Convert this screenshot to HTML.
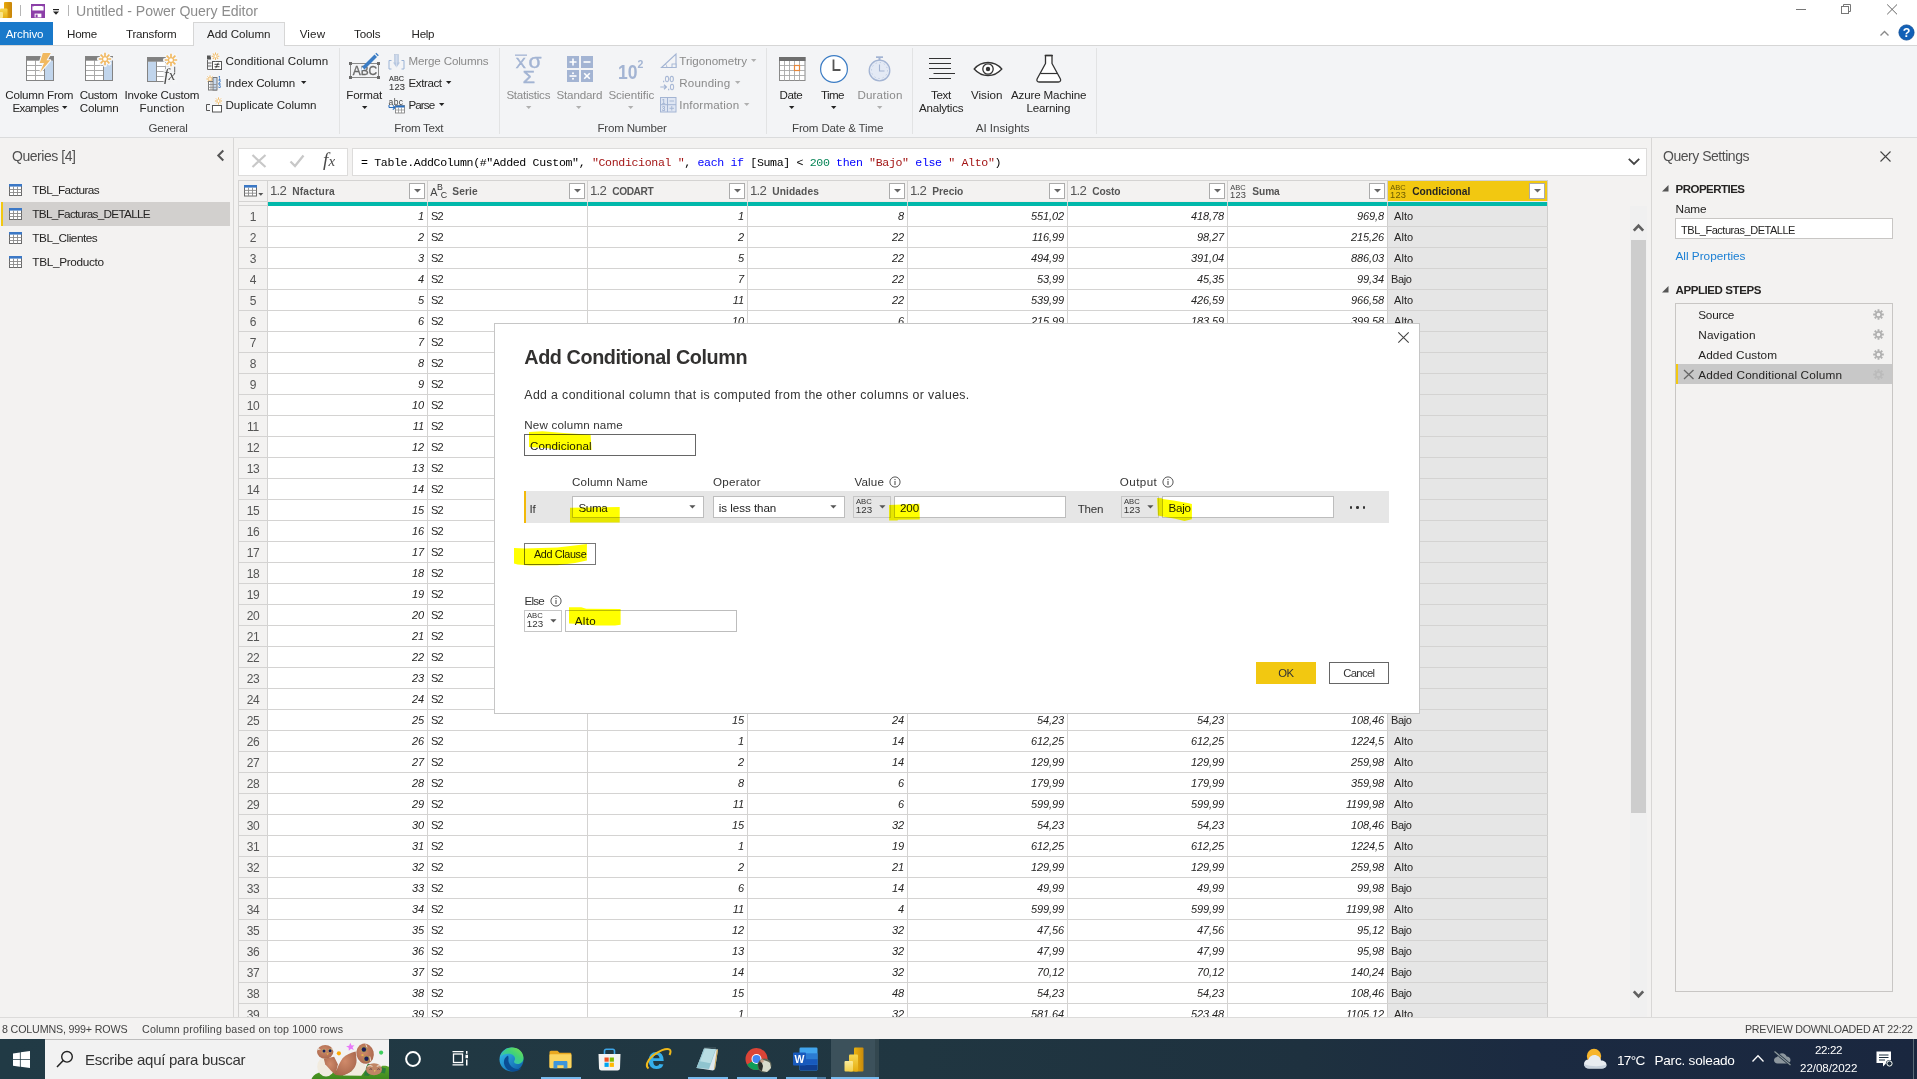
<!DOCTYPE html>
<html><head><meta charset="utf-8"><title>Untitled - Power Query Editor</title><style>html,body{margin:0;padding:0;}
body{width:1917px;height:1079px;overflow:hidden;position:relative;background:#f3f2f1;font-family:"Liberation Sans",sans-serif;color:#252423;}
.t{position:absolute;white-space:pre;line-height:1;display:block;}
.r{position:absolute;display:block;}
svg{overflow:visible;}</style></head><body>
<div class="r" style="left:0px;top:0px;width:1917px;height:46px;background:#ffffff;"></div>
<svg class="r" style="left:0px;top:0px;" width="14" height="22" viewBox="0 0 14 22">
      <defs><linearGradient id="pb1" x1="0" y1="0" x2="1" y2="0"><stop offset="0" stop-color="#e8a90a"/><stop offset="1" stop-color="#c8850a"/></linearGradient>
      <linearGradient id="pb2" x1="0" y1="0" x2="0" y2="1"><stop offset="0" stop-color="#f6d751"/><stop offset="1" stop-color="#e6ad10"/></linearGradient></defs>
      <rect x="4" y="2" width="8" height="16" rx="1" fill="url(#pb1)"/>
      <rect x="0" y="8.5" width="7.5" height="9.5" rx="1" fill="url(#pb2)"/>
      <rect x="-4" y="12" width="7" height="6" rx="1" fill="#f9e589"/></svg>
<div class="r" style="left:20px;top:5px;width:1px;height:11px;background:#b5b5b5;"></div>
<svg class="r" style="left:31px;top:4px;" width="14" height="14" viewBox="0 0 14 14"><path d="M0.7 0.7h12.6v12.6h-12.6z" fill="#fff" stroke="#8c3fa8" stroke-width="1.4"/>
      <rect x="0.7" y="0.7" width="12.6" height="1.6" fill="#8c3fa8"/>
      <rect x="3" y="2" width="8" height="4.2" fill="#fff" stroke="#8c3fa8" stroke-width="0"/>
      <path d="M0.7 6.5h12.6v6.8h-12.6z" fill="#8c3fa8"/>
      <rect x="3.6" y="9.6" width="6.8" height="3.8" fill="#fff"/><rect x="4.6" y="10.6" width="2" height="2.8" fill="#8c3fa8"/></svg>
<svg class="r" style="left:52px;top:8px;" width="8" height="8" viewBox="0 0 8 8"><rect x="1" y="1" width="6" height="1.2" fill="#222"/><path d="M1 3.6h6l-3 3.2z" fill="#222"/></svg>
<div class="r" style="left:68px;top:5px;width:1px;height:11px;background:#b5b5b5;"></div>
<span class="t" style="top:4.00px;font-size:14.1px;left:76.00px;letter-spacing:-0.047px;color:#8c8c8c;">Untitled - Power Query Editor</span>
<div class="r" style="left:1796px;top:9px;width:10px;height:1px;background:#777;"></div>
<svg class="r" style="left:1840px;top:3px;" width="12" height="12" viewBox="0 0 12 12"><path d="M3.5 3.5v-2h7v7h-2" fill="none" stroke="#777" stroke-width="1"/><rect x="1.5" y="3.5" width="7" height="7" fill="none" stroke="#777" stroke-width="1"/></svg>
<svg class="r" style="left:1885px;top:2.5px;" width="13" height="13" viewBox="0 0 13 13"><path d="M2.2 1.5l9.8 9.8M12 1.5l-9.8 9.8" stroke="#666" stroke-width="1" fill="none"/></svg>
<svg class="r" style="left:1879px;top:28px;" width="12" height="10" viewBox="0 0 12 10"><path d="M1.5 7.5l4-4 4 4" stroke="#8a8a8a" stroke-width="1.4" fill="none"/></svg>
<svg class="r" style="left:1897.5px;top:24.4px;" width="17" height="17" viewBox="0 0 17 17"><circle cx="8.5" cy="8.5" r="7.6" fill="#1160b7" stroke="#0a4a94" stroke-width="0.8"/><text x="8.5" y="13" text-anchor="middle" font-family="Liberation Sans" font-weight="bold" font-size="12.5" fill="#fff">?</text></svg>
<div class="r" style="left:0px;top:45px;width:1917px;height:1px;background:#d6d6d6;"></div>
<div class="r" style="left:0px;top:22px;width:53px;height:23px;background:#1979ca;"></div>
<span class="t" style="top:28.00px;font-size:11.6px;left:5.70px;letter-spacing:-0.140px;color:#ffffff;">Archivo</span>
<span class="t" style="top:28.00px;font-size:11.6px;left:67.00px;letter-spacing:-0.236px;">Home</span>
<span class="t" style="top:28.00px;font-size:11.6px;left:126.00px;letter-spacing:-0.202px;">Transform</span>
<div class="r" style="left:193px;top:22px;width:90px;height:24px;background:#f3f4f6;border:1px solid #d6d6d6;border-bottom:none;"></div>
<span class="t" style="top:28.00px;font-size:11.6px;left:207.00px;letter-spacing:-0.033px;">Add Column</span>
<span class="t" style="top:28.00px;font-size:11.6px;left:299.70px;letter-spacing:0.142px;">View</span>
<span class="t" style="top:28.00px;font-size:11.6px;left:354.00px;letter-spacing:-0.156px;">Tools</span>
<span class="t" style="top:28.00px;font-size:11.6px;left:411.60px;letter-spacing:-0.289px;">Help</span>
<div class="r" style="left:0px;top:46px;width:1917px;height:91px;background:#f3f4f6;"></div>
<div class="r" style="left:0px;top:137px;width:1917px;height:1px;background:#dadbdc;"></div>
<div class="r" style="left:193.5px;top:45px;width:90px;height:2px;background:#f3f4f6;"></div>
<div class="r" style="left:339px;top:48px;width:1px;height:86px;background:#e2e3e4;"></div>
<div class="r" style="left:499px;top:48px;width:1px;height:86px;background:#e2e3e4;"></div>
<div class="r" style="left:766px;top:48px;width:1px;height:86px;background:#e2e3e4;"></div>
<div class="r" style="left:912px;top:48px;width:1px;height:86px;background:#e2e3e4;"></div>
<div class="r" style="left:1096px;top:48px;width:1px;height:86px;background:#e2e3e4;"></div>
<svg class="r" style="left:26px;top:52px;" width="30" height="30" viewBox="0 0 30 30"><g transform="translate(0,4)"><rect x="0.5" y="0.5" width="27" height="24" fill="#fff" stroke="#838383"/>
      <path d="M1 9.5h26M1 14.5h26M1 19.5h26M9.5 4.5v20M18.5 4.5v20" stroke="#a9a9a9" stroke-width="1" fill="none"/>
      <rect x="18.5" y="4.5" width="9.0" height="20" fill="#c1d5ec"/>
      <path d="M18.5 4.5v20" stroke="#8a8a8a" stroke-width="1"/>
      <rect x="0" y="0" width="28" height="4.7" fill="#808080"/>
      <rect x="0.5" y="0.5" width="27" height="24" fill="none" stroke="#838383"/></g>
      <path d="M16.85 1L24.8 1L20.5 8.3L24.2 8.3L14.1 20.2L18 11.1L13.7 11.1z" fill="#f6f7f9" stroke="#f6f7f9" stroke-width="2.2" stroke-linejoin="round"/>
      <path d="M16.85 1L24.8 1L20.5 8.3L24.2 8.3L14.1 20.2L18 11.1L13.7 11.1z" fill="#f1b961"/></svg>
<span class="t" style="top:89.00px;font-size:11.6px;left:5.30px;letter-spacing:-0.205px;">Column From</span>
<span class="t" style="top:102.00px;font-size:11.6px;left:12.40px;letter-spacing:-0.604px;">Examples</span>
<svg class="r" style="left:61.7px;top:106.2px;" width="7" height="5" viewBox="0 0 7 5"><path d="M0 0h5.400l-2.700 3z" fill="#222"/></svg>
<svg class="r" style="left:85px;top:50px;" width="32" height="32" viewBox="0 0 32 32"><g transform="translate(0,6)"><rect x="0.5" y="0.5" width="27" height="24" fill="#fff" stroke="#838383"/>
      <path d="M1 9.5h26M1 14.5h26M1 19.5h26M9.5 4.5v20M18.5 4.5v20" stroke="#a9a9a9" stroke-width="1" fill="none"/>
      <rect x="18.5" y="4.5" width="9.0" height="20" fill="#c1d5ec"/>
      <path d="M18.5 4.5v20" stroke="#8a8a8a" stroke-width="1"/>
      <rect x="0" y="0" width="28" height="4.7" fill="#808080"/>
      <rect x="0.5" y="0.5" width="27" height="24" fill="none" stroke="#838383"/></g><path d="M23.10 9.00L26.20 9.00M22.19 11.19L24.38 13.38M20.00 12.10L20.00 15.20M17.81 11.19L15.62 13.38M16.90 9.00L13.80 9.00M17.81 6.81L15.62 4.62M20.00 5.90L20.00 2.80M22.19 6.81L24.38 4.62" stroke="#f6f7f9" stroke-width="3.84" stroke-linecap="round" fill="none"/><circle cx="20" cy="9" r="3.84" fill="#f6f7f9"/><path d="M23.10 9.00L26.20 9.00M22.19 11.19L24.38 13.38M20.00 12.10L20.00 15.20M17.81 11.19L15.62 13.38M16.90 9.00L13.80 9.00M17.81 6.81L15.62 4.62M20.00 5.90L20.00 2.80M22.19 6.81L24.38 4.62" stroke="#f1b961" stroke-width="1.67" fill="none"/><circle cx="20" cy="9" r="2.48" fill="#fff" stroke="#f1b961" stroke-width="1.24"/></svg>
<span class="t" style="top:89.00px;font-size:11.6px;left:79.80px;letter-spacing:-0.394px;">Custom</span>
<span class="t" style="top:102.00px;font-size:11.6px;left:79.80px;letter-spacing:-0.212px;">Column</span>
<svg class="r" style="left:147px;top:50px;" width="34" height="36" viewBox="0 0 34 36"><g transform="translate(0,7)"><rect x="0.5" y="0.5" width="26" height="24" fill="#fff" stroke="#838383"/>
      <path d="M1 9.5h25M1 14.5h25M1 19.5h25M9.5 4.5v20M18.5 4.5v20" stroke="#a9a9a9" stroke-width="1" fill="none"/>
      <rect x="0.5" y="4.5" width="9.5" height="20" fill="#c1d5ec"/>
      <path d="M9.5 4.5v20" stroke="#8a8a8a" stroke-width="1"/>
      <rect x="0" y="0" width="27" height="4.7" fill="#808080"/>
      <rect x="0.5" y="0.5" width="26" height="24" fill="none" stroke="#838383"/></g>
      <rect x="19" y="12" width="10" height="22" fill="#f3f4f6" opacity="0.75"/><rect x="24" y="7" width="6" height="26" fill="#f3f4f6"/><rect x="16.500" y="19" width="14" height="15" fill="#f3f4f6" opacity="0.85"/>
      <path d="M27.10 10.00L30.20 10.00M26.19 12.19L28.38 14.38M24.00 13.10L24.00 16.20M21.81 12.19L19.62 14.38M20.90 10.00L17.80 10.00M21.81 7.81L19.62 5.62M24.00 6.90L24.00 3.80M26.19 7.81L28.38 5.62" stroke="#f6f7f9" stroke-width="3.84" stroke-linecap="round" fill="none"/><circle cx="24" cy="10" r="3.84" fill="#f6f7f9"/><path d="M27.10 10.00L30.20 10.00M26.19 12.19L28.38 14.38M24.00 13.10L24.00 16.20M21.81 12.19L19.62 14.38M20.90 10.00L17.80 10.00M21.81 7.81L19.62 5.62M24.00 6.90L24.00 3.80M26.19 7.81L28.38 5.62" stroke="#f1b961" stroke-width="1.67" fill="none"/><circle cx="24" cy="10" r="2.48" fill="#fff" stroke="#f1b961" stroke-width="1.24"/>
      <text x="17" y="30" font-family="Liberation Serif" font-style="italic" font-size="16.500" fill="#4a4a4a">f</text><text x="21.500" y="30.300" font-family="Liberation Serif" font-style="italic" font-size="15.500" fill="#4a4a4a">x</text><rect x="27.200" y="16.700" width="1" height="6" fill="#666"/></svg>
<span class="t" style="top:89.00px;font-size:11.6px;left:124.60px;letter-spacing:-0.205px;">Invoke Custom</span>
<span class="t" style="top:102.00px;font-size:11.6px;left:139.50px;letter-spacing:0.051px;">Function</span>
<svg class="r" style="left:206px;top:52px;" width="17" height="18" viewBox="0 0 17 18"><rect x="1" y="3.5" width="4" height="4" fill="#555"/><path d="M1.5 8v9.5h5M1.5 11h4M1.5 14h4" stroke="#666" fill="none"/>
      <rect x="6.5" y="9.5" width="9" height="8" fill="#fff" stroke="#555"/><path d="M8.5 12.3h5M8.5 14.7h5M12.3 10.8l-2.6 5.4" stroke="#333" stroke-width="0.9"/><path d="M11.40 4.20L13.30 4.20M10.84 5.54L12.19 6.89M9.50 6.10L9.50 8.00M8.16 5.54L6.81 6.89M7.60 4.20L5.70 4.20M8.16 2.86L6.81 1.51M9.50 2.30L9.50 0.40M10.84 2.86L12.19 1.51" stroke="#f6f7f9" stroke-width="2.36" stroke-linecap="round" fill="none"/><circle cx="9.5" cy="4.2" r="2.36" fill="#f6f7f9"/><path d="M11.40 4.20L13.30 4.20M10.84 5.54L12.19 6.89M9.50 6.10L9.50 8.00M8.16 5.54L6.81 6.89M7.60 4.20L5.70 4.20M8.16 2.86L6.81 1.51M9.50 2.30L9.50 0.40M10.84 2.86L12.19 1.51" stroke="#f1b961" stroke-width="1.03" fill="none"/><circle cx="9.5" cy="4.2" r="1.52" fill="#fff" stroke="#f1b961" stroke-width="0.76"/></svg>
<span class="t" style="top:55.00px;font-size:11.6px;left:225.50px;letter-spacing:0.093px;">Conditional Column</span>
<svg class="r" style="left:206px;top:75px;" width="17" height="16" viewBox="0 0 17 16"><path d="M5.80 4.00L7.60 4.00M5.27 5.27L6.55 6.55M4.00 5.80L4.00 7.60M2.73 5.27L1.45 6.55M2.20 4.00L0.40 4.00M2.73 2.73L1.45 1.45M4.00 2.20L4.00 0.40M5.27 2.73L6.55 1.45" stroke="#f6f7f9" stroke-width="2.23" stroke-linecap="round" fill="none"/><circle cx="4" cy="4" r="2.23" fill="#f6f7f9"/><path d="M5.80 4.00L7.60 4.00M5.27 5.27L6.55 6.55M4.00 5.80L4.00 7.60M2.73 5.27L1.45 6.55M2.20 4.00L0.40 4.00M2.73 2.73L1.45 1.45M4.00 2.20L4.00 0.40M5.27 2.73L6.55 1.45" stroke="#f1b961" stroke-width="0.97" fill="none"/><circle cx="4" cy="4" r="1.44" fill="#fff" stroke="#f1b961" stroke-width="0.72"/><rect x="2.5" y="6.5" width="8" height="8.5" fill="#fff" stroke="#777"/><rect x="7" y="2.5" width="4" height="12.5" fill="#c8daf0" stroke="#777"/>
      <path d="M2.5 9.5h8M2.5 12.3h8M5 6.5v8.5" stroke="#888" stroke-width="0.8"/>
      <text x="12.2" y="4.6" font-family="Liberation Sans" font-size="4.6" font-weight="bold" fill="#2a6fc0">1</text><text x="12.2" y="9" font-family="Liberation Sans" font-size="4.6" font-weight="bold" fill="#2a6fc0">2</text><text x="12.2" y="13.4" font-family="Liberation Sans" font-size="4.6" font-weight="bold" fill="#2a6fc0">3</text></svg>
<span class="t" style="top:77.00px;font-size:11.6px;left:225.50px;letter-spacing:-0.156px;">Index Column</span>
<svg class="r" style="left:300.8px;top:81px;" width="7" height="5" viewBox="0 0 7 5"><path d="M0 0h5.400l-2.700 3z" fill="#222"/></svg>
<svg class="r" style="left:206px;top:97px;" width="17" height="16" viewBox="0 0 17 16"><path d="M14.30 4.00L16.10 4.00M13.77 5.27L15.05 6.55M12.50 5.80L12.50 7.60M11.23 5.27L9.95 6.55M10.70 4.00L8.90 4.00M11.23 2.73L9.95 1.45M12.50 2.20L12.50 0.40M13.77 2.73L15.05 1.45" stroke="#f6f7f9" stroke-width="2.23" stroke-linecap="round" fill="none"/><circle cx="12.5" cy="4" r="2.23" fill="#f6f7f9"/><path d="M14.30 4.00L16.10 4.00M13.77 5.27L15.05 6.55M12.50 5.80L12.50 7.60M11.23 5.27L9.95 6.55M10.70 4.00L8.90 4.00M11.23 2.73L9.95 1.45M12.50 2.20L12.50 0.40M13.77 2.73L15.05 1.45" stroke="#f1b961" stroke-width="0.97" fill="none"/><circle cx="12.5" cy="4" r="1.44" fill="#fff" stroke="#f1b961" stroke-width="0.72"/><path d="M4 7.5h-3.5v6h3.5" fill="none" stroke="#555"/><rect x="6.5" y="8.5" width="9" height="6.5" fill="#fff" stroke="#555"/></svg>
<span class="t" style="top:99.00px;font-size:11.6px;left:225.50px;letter-spacing:-0.035px;">Duplicate Column</span>
<span class="t" style="top:122.00px;font-size:11.6px;left:148.60px;letter-spacing:-0.353px;color:#444;">General</span>
<svg class="r" style="left:348px;top:51px;" width="34" height="29" viewBox="0 0 34 29"><text x="4.700" y="24.400" font-family="Liberation Sans" font-size="12.2" fill="#6a6a6a" stroke="#6a6a6a" stroke-width="0.350" textLength="24.500" lengthAdjust="spacingAndGlyphs">ABC</text>
      <rect x="2.500" y="12.500" width="28" height="14" fill="none" stroke="#8a8a8a"/>
      <g fill="#6a6a6a"><rect x="1" y="11" width="3" height="3"/><rect x="29" y="11" width="3" height="3"/><rect x="1" y="25" width="3" height="3"/><rect x="29" y="25" width="3" height="3"/></g>
      <path d="M13 19.5l1-3.5 12.5-12.5 2.5 2.5-12.5 12.5z" fill="#3b7cc4"/><path d="M27.3 2.7l1-1 2.5 2.5-1 1z" fill="#3b7cc4"/><path d="M13 19.5l1-3.5 2.5 2.5z" fill="#fff"/></svg>
<span class="t" style="top:89.00px;font-size:11.6px;left:346.30px;letter-spacing:-0.173px;">Format</span>
<svg class="r" style="left:362px;top:106.2px;" width="7" height="5" viewBox="0 0 7 5"><path d="M0 0h5.400l-2.700 3z" fill="#222"/></svg>
<svg class="r" style="left:388px;top:54px;" width="18" height="16" viewBox="0 0 18 16"><path d="M3.5 6.5h-2.5v8.5h2.5M13.500 6.500h2.500v8.500h-2.500" fill="none" stroke="#9ab3d6"/>
      <rect x="6.5" y="0.5" width="4" height="9" fill="#c5d3e8" stroke="#b5c3d8" stroke-width="0.6"/><path d="M5 8.5h7l-3.500 5z" fill="#b7c7e0"/><path d="M8.5 1v12" stroke="#d8e0ee" stroke-width="0.8"/></svg>
<span class="t" style="top:55.00px;font-size:11.6px;left:408.50px;letter-spacing:-0.152px;color:#8a8a8a;">Merge Columns</span>
<svg class="r" style="left:388px;top:74px;" width="18" height="17" viewBox="0 0 18 17"><text x="1" y="6.500" font-family="Liberation Sans" font-size="7.200" fill="#3a3a3a" stroke="#3a3a3a" stroke-width="0.150" textLength="15">ABC</text><text x="1" y="15.900" font-family="Liberation Sans" font-size="9.300" fill="#3a3a3a" stroke="#3a3a3a" stroke-width="0.100" textLength="16">123</text></svg>
<span class="t" style="top:77.00px;font-size:11.6px;left:408.50px;letter-spacing:-0.414px;">Extract</span>
<svg class="r" style="left:446px;top:81px;" width="7" height="5" viewBox="0 0 7 5"><path d="M0 0h5.400l-2.700 3z" fill="#222"/></svg>
<svg class="r" style="left:388px;top:97px;" width="18" height="17" viewBox="0 0 18 17"><text x="0.500" y="7.500" font-family="Liberation Sans" font-size="8.500" fill="#444" textLength="14.500">abc</text>
      <path d="M1 10.5h6M4.800 8.300l2.500 2.200-2.500 2.200" fill="none" stroke="#2a6fc0" stroke-width="1.100"/><path d="M1 8v2.500" stroke="#2a6fc0" stroke-width="1.100"/>
      <rect x="7.500" y="8.500" width="9" height="7.500" fill="#fff" stroke="#777" stroke-width="0.800"/><rect x="7.500" y="8.500" width="9" height="2" fill="#2a6fc0"/><path d="M7.500 13h9M10.500 10.500v5.500M13.500 10.500v5.500" stroke="#888" stroke-width="0.700"/></svg>
<span class="t" style="top:99.00px;font-size:11.6px;left:408.50px;letter-spacing:-0.921px;">Parse</span>
<svg class="r" style="left:438.6px;top:103.1px;" width="7" height="5" viewBox="0 0 7 5"><path d="M0 0h5.400l-2.700 3z" fill="#222"/></svg>
<span class="t" style="top:122.00px;font-size:11.6px;left:394.30px;letter-spacing:-0.261px;color:#444;">From Text</span>
<svg class="r" style="left:514px;top:53px;" width="30" height="32" viewBox="0 0 30 32"><text x="1.800" y="15.200" font-family="Liberation Sans" font-size="15" fill="#a3b4d3" stroke="#a3b4d3" stroke-width="0.500">X</text><rect x="1" y="1.500" width="12" height="1.300" fill="#a3b4d3"/>
      <text x="14.500" y="15.200" font-family="Liberation Sans" font-size="20.500" fill="#a3b4d3" stroke="#a3b4d3" stroke-width="0.400" textLength="13" lengthAdjust="spacingAndGlyphs">σ</text>
      <text x="8.800" y="29.700" font-family="Liberation Sans" font-size="16.500" fill="#a3b4d3" stroke="#a3b4d3" stroke-width="0.500" textLength="12.200" lengthAdjust="spacingAndGlyphs">Σ</text></svg>
<span class="t" style="top:89.00px;font-size:11.6px;left:506.40px;letter-spacing:-0.261px;color:#8a8a8a;">Statistics</span>
<svg class="r" style="left:525.8px;top:106.2px;" width="7" height="5" viewBox="0 0 7 5"><path d="M0 0h5.400l-2.700 3z" fill="#b0b0b0"/></svg>
<svg class="r" style="left:567px;top:56px;" width="27" height="27" viewBox="0 0 27 27"><g fill="#a3b4d3"><rect x="0" y="0" width="12" height="12"/><rect x="14" y="0" width="12" height="12"/><rect x="0" y="14" width="12" height="12"/><rect x="14" y="14" width="12" height="12"/></g>
      <g stroke="#fff" stroke-width="1.6" fill="none"><path d="M2.5 6h7M6 2.500v7"/><path d="M16.500 6h7"/><path d="M2.500 20h7"/><path d="M17.200 17.200l5.600 5.600M22.800 17.200l-5.600 5.600"/></g>
      <g fill="#fff"><circle cx="6" cy="17.200" r="1"/><circle cx="6" cy="22.800" r="1"/></g></svg>
<span class="t" style="top:89.00px;font-size:11.6px;left:556.40px;letter-spacing:-0.135px;color:#8a8a8a;">Standard</span>
<svg class="r" style="left:576.4px;top:106.2px;" width="7" height="5" viewBox="0 0 7 5"><path d="M0 0h5.400l-2.700 3z" fill="#b0b0b0"/></svg>
<svg class="r" style="left:617px;top:55px;" width="30" height="26" viewBox="0 0 30 26"><text x="1" y="23.500" font-family="Liberation Sans" font-weight="bold" font-size="20.500" fill="#a3b4d3" textLength="19.500" lengthAdjust="spacingAndGlyphs">10</text>
      <text x="20.500" y="12.500" font-family="Liberation Sans" font-weight="bold" font-size="10.500" fill="#a3b4d3">2</text></svg>
<span class="t" style="top:89.00px;font-size:11.6px;left:608.40px;letter-spacing:-0.052px;color:#8a8a8a;">Scientific</span>
<svg class="r" style="left:627.8px;top:106.2px;" width="7" height="5" viewBox="0 0 7 5"><path d="M0 0h5.400l-2.700 3z" fill="#b0b0b0"/></svg>
<svg class="r" style="left:660px;top:52px;" width="17" height="17" viewBox="0 0 17 17"><path d="M1.5 15.500h14.500v-13.500z" fill="none" stroke="#a3b4d3" stroke-width="1.100"/><rect x="12" y="12" width="4" height="3.500" fill="#f3f4f6" stroke="#a3b4d3" stroke-width="0.900"/><path d="M7 15.500a6 6 0 0 0-1.500-3.500" fill="none" stroke="#a3b4d3" stroke-width="0.900"/></svg>
<span class="t" style="top:55.00px;font-size:11.6px;left:679.30px;letter-spacing:-0.017px;color:#8a8a8a;">Trigonometry</span>
<svg class="r" style="left:751px;top:59px;" width="7" height="5" viewBox="0 0 7 5"><path d="M0 0h5.400l-2.700 3z" fill="#b0b0b0"/></svg>
<svg class="r" style="left:660px;top:75px;" width="17" height="16" viewBox="0 0 17 16"><text x="2.500" y="7" font-family="Liberation Sans" font-size="8.200" fill="#a3b4d3" stroke="#a3b4d3" stroke-width="0.300" textLength="11.500">.00</text><text x="7.500" y="15.300" font-family="Liberation Sans" font-size="8.200" fill="#a3b4d3" stroke="#a3b4d3" stroke-width="0.300">.0</text>
      <path d="M0.300 12h6M4 9.700l2.400 2.300-2.400 2.300" fill="none" stroke="#a3b4d3" stroke-width="1.200"/></svg>
<span class="t" style="top:77.00px;font-size:11.6px;left:679.30px;letter-spacing:0.180px;color:#8a8a8a;">Rounding</span>
<svg class="r" style="left:735px;top:81px;" width="7" height="5" viewBox="0 0 7 5"><path d="M0 0h5.400l-2.700 3z" fill="#b0b0b0"/></svg>
<svg class="r" style="left:660px;top:97px;" width="17" height="16" viewBox="0 0 17 16"><rect x="0.500" y="0.500" width="15.500" height="14.500" fill="#dfe6f3" stroke="#a3b4d3"/><path d="M0.500 7.700h15.500M7.500 0.500v14.500" stroke="#a3b4d3"/>
      <text x="1.800" y="6.500" font-family="Liberation Sans" font-size="6.500" fill="#a3b4d3" font-weight="bold">1</text><text x="1.800" y="14" font-family="Liberation Sans" font-size="6.500" fill="#a3b4d3" font-weight="bold">3</text>
      <path d="M9.500 4h4.500M9.500 11.300h4.500M11.750 9v4.600" stroke="#a3b4d3" stroke-width="0.900"/></svg>
<span class="t" style="top:99.00px;font-size:11.6px;left:679.30px;letter-spacing:0.179px;color:#8a8a8a;">Information</span>
<svg class="r" style="left:744px;top:103.1px;" width="7" height="5" viewBox="0 0 7 5"><path d="M0 0h5.400l-2.700 3z" fill="#b0b0b0"/></svg>
<span class="t" style="top:122.00px;font-size:11.6px;left:597.40px;letter-spacing:-0.204px;color:#444;">From Number</span>
<svg class="r" style="left:779px;top:57px;" width="27" height="24" viewBox="0 0 27 24"><rect x="0.500" y="0.500" width="25.500" height="23" fill="#fff" stroke="#8a8a8a"/><rect x="0" y="0" width="26.500" height="4" fill="#6e6e6e"/>
      <path d="M1 8.500h25M1 13.500h25M1 18.500h25M5.500 4v19.500M10.500 4v19.500M15.500 4v19.500M20.500 4v19.500" stroke="#a8a8a8" stroke-width="0.900" fill="none"/>
      <rect x="15.500" y="8.500" width="5" height="5" fill="#fff" stroke="#e8873a" stroke-width="1.200"/></svg>
<span class="t" style="top:89.00px;font-size:11.6px;left:779.50px;letter-spacing:-0.426px;">Date</span>
<svg class="r" style="left:788.5px;top:106.2px;" width="7" height="5" viewBox="0 0 7 5"><path d="M0 0h5.400l-2.700 3z" fill="#222"/></svg>
<svg class="r" style="left:819px;top:54px;" width="30" height="30" viewBox="0 0 30 30"><circle cx="15" cy="15" r="13.400" fill="#fff" stroke="#3b7cc4" stroke-width="1.200"/><path d="M14.500 5.500v10.500h7" fill="none" stroke="#555" stroke-width="1.800"/></svg>
<span class="t" style="top:89.00px;font-size:11.6px;left:821.00px;letter-spacing:-0.587px;">Time</span>
<svg class="r" style="left:830.5px;top:106.2px;" width="7" height="5" viewBox="0 0 7 5"><path d="M0 0h5.400l-2.700 3z" fill="#222"/></svg>
<svg class="r" style="left:867px;top:54px;" width="26" height="29" viewBox="0 0 26 29"><circle cx="12.500" cy="16.500" r="10.300" fill="#e4eaf5" stroke="#a3b4d3" stroke-width="1.300"/><rect x="9" y="2.300" width="7" height="1.700" fill="#a3b4d3"/><rect x="11.500" y="3" width="2" height="3.500" fill="#a3b4d3"/>
      <path d="M12.500 10.500v6.500h5" fill="none" stroke="#a3b4d3" stroke-width="1.100"/><circle cx="12.500" cy="16.500" r="8" fill="none" stroke="#a3b4d3" stroke-width="0.900" stroke-dasharray="0.800 3.400"/></svg>
<span class="t" style="top:89.00px;font-size:11.6px;left:857.40px;letter-spacing:0.169px;color:#8a8a8a;">Duration</span>
<svg class="r" style="left:876.6px;top:106.2px;" width="7" height="5" viewBox="0 0 7 5"><path d="M0 0h5.400l-2.700 3z" fill="#b0b0b0"/></svg>
<span class="t" style="top:122.00px;font-size:11.6px;left:792.00px;letter-spacing:-0.176px;color:#444;">From Date &amp; Time</span>
<svg class="r" style="left:928px;top:56px;" width="28" height="24" viewBox="0 0 28 24"><path d="M1 2.500h22M1 7.500h22M1 12.500h22M5.500 17.500h21.500M1 22.500h22" stroke="#333" stroke-width="1" fill="none"/></svg>
<span class="t" style="top:89.00px;font-size:11.6px;left:931.00px;letter-spacing:-0.369px;">Text</span>
<span class="t" style="top:102.00px;font-size:11.6px;left:919.00px;letter-spacing:-0.235px;">Analytics</span>
<svg class="r" style="left:973px;top:60px;" width="30" height="18" viewBox="0 0 30 18"><path d="M1.200 9c4-4.600 8.500-6.500 13.800-6.500s9.800 1.900 13.800 6.500c-4 4.600-8.500 6.500-13.800 6.500s-9.800-1.900-13.800-6.500z" fill="#fff" stroke="#333" stroke-width="1.300"/>
      <circle cx="15" cy="9" r="5.200" fill="#fff" stroke="#333" stroke-width="1.300"/><circle cx="15" cy="9" r="2.200" fill="#333"/></svg>
<span class="t" style="top:89.00px;font-size:11.6px;left:971.00px;letter-spacing:0.003px;">Vision</span>
<svg class="r" style="left:1035px;top:53px;" width="28" height="31" viewBox="0 0 28 31"><path d="M10.500 2.500h6.500v8l8.300 15.300c0.900 1.700 0 3.200-1.900 3.200h-19.300c-1.900 0-2.800-1.500-1.900-3.200l8.300-15.300z" fill="#fff" stroke="#333" stroke-width="1.300" stroke-linejoin="round"/>
      <path d="M5.300 20.500h17" stroke="#333" stroke-width="1.200"/><path d="M9.700 2.500h8.100" stroke="#333" stroke-width="1.300"/></svg>
<span class="t" style="top:89.00px;font-size:11.6px;left:1011.00px;letter-spacing:-0.152px;">Azure Machine</span>
<span class="t" style="top:102.00px;font-size:11.6px;left:1026.40px;letter-spacing:-0.169px;">Learning</span>
<span class="t" style="top:122.00px;font-size:11.6px;left:975.80px;letter-spacing:-0.042px;color:#444;">AI Insights</span>
<div class="r" style="left:0px;top:138px;width:1917px;height:880px;background:#f3f2f1;"></div>
<div class="r" style="left:233px;top:138px;width:1px;height:880px;background:#d8d7d6;"></div>
<span class="t" style="top:149.00px;font-size:14px;left:12.00px;letter-spacing:-0.452px;color:#505050;">Queries [4]</span>
<svg class="r" style="left:215px;top:149px;" width="10" height="13" viewBox="0 0 10 13"><path d="M8.300 1.500l-5 5 5 5" fill="none" stroke="#555" stroke-width="2"/></svg>
<svg class="r" style="left:9px;top:184px;" width="13" height="12" viewBox="0 0 13 12"><rect x="0.5" y="0.5" width="12" height="11" fill="#fff" stroke="#6a6a6a"/><rect x="0" y="0" width="13" height="2.6" fill="#3b78c6"/>
      <path d="M0.5 5.5h12M0.5 8.5h12M4.5 2.6v9M8.5 2.6v9" stroke="#8a8a8a" stroke-width="0.9" fill="none"/></svg>
<span class="t" style="top:185.00px;font-size:11.8px;left:32.30px;letter-spacing:-0.617px;">TBL_Facturas</span>
<div class="r" style="left:1px;top:202px;width:228.5px;height:23.7px;background:#d2d0ce;"></div>
<div class="r" style="left:1px;top:202px;width:2.2px;height:23.7px;background:#f2c811;"></div>
<svg class="r" style="left:9px;top:208px;" width="13" height="12" viewBox="0 0 13 12"><rect x="0.5" y="0.5" width="12" height="11" fill="#fff" stroke="#6a6a6a"/><rect x="0" y="0" width="13" height="2.6" fill="#3b78c6"/>
      <path d="M0.5 5.5h12M0.5 8.5h12M4.5 2.6v9M8.5 2.6v9" stroke="#8a8a8a" stroke-width="0.9" fill="none"/></svg>
<span class="t" style="top:209.00px;font-size:11.8px;left:32.30px;letter-spacing:-0.728px;">TBL_Facturas_DETALLE</span>
<svg class="r" style="left:9px;top:232px;" width="13" height="12" viewBox="0 0 13 12"><rect x="0.5" y="0.5" width="12" height="11" fill="#fff" stroke="#6a6a6a"/><rect x="0" y="0" width="13" height="2.6" fill="#3b78c6"/>
      <path d="M0.5 5.5h12M0.5 8.5h12M4.5 2.6v9M8.5 2.6v9" stroke="#8a8a8a" stroke-width="0.9" fill="none"/></svg>
<span class="t" style="top:233.00px;font-size:11.8px;left:32.30px;letter-spacing:-0.486px;">TBL_Clientes</span>
<svg class="r" style="left:9px;top:256px;" width="13" height="12" viewBox="0 0 13 12"><rect x="0.5" y="0.5" width="12" height="11" fill="#fff" stroke="#6a6a6a"/><rect x="0" y="0" width="13" height="2.6" fill="#3b78c6"/>
      <path d="M0.5 5.5h12M0.5 8.5h12M4.5 2.6v9M8.5 2.6v9" stroke="#8a8a8a" stroke-width="0.9" fill="none"/></svg>
<span class="t" style="top:257.00px;font-size:11.8px;left:32.30px;letter-spacing:-0.328px;">TBL_Producto</span>
<div class="r" style="left:238px;top:148px;width:110px;height:28px;background:#fff;border:1px solid #dddcdb;box-sizing:border-box;"></div>
<div class="r" style="left:352px;top:148px;width:1295px;height:28px;background:#fff;border:1px solid #dddcdb;box-sizing:border-box;"></div>
<svg class="r" style="left:250px;top:153px;" width="18" height="16" viewBox="0 0 18 16"><path d="M2.500 2l13 12M15.500 2l-13 12" stroke="#c8c8c8" stroke-width="2.200" fill="none"/></svg>
<svg class="r" style="left:288px;top:153px;" width="18" height="16" viewBox="0 0 18 16"><path d="M2.500 8.500l4.500 4.500 8.500-10.500" stroke="#c8c8c8" stroke-width="2.300" fill="none"/></svg>
<span class="t" style="top:150.00px;font-size:19px;left:323.00px;color:#4a4a4a;font-style:italic;font-family:'Liberation Serif',monospace;">f</span>
<span class="t" style="top:154.00px;font-size:15px;left:328.50px;color:#4a4a4a;font-style:italic;font-family:'Liberation Serif',monospace;">x</span>
<span class="t" style="left:361px;top:157px;font-size:11.6px;font-family:'Liberation Mono',monospace;white-space:pre;letter-spacing:-0.36px;"><span style="color:#000">= Table.AddColumn(#"Added Custom", </span><span style="color:#a31515">"Condicional "</span><span style="color:#000">, </span><span style="color:#0000ff">each</span><span style="color:#000"> </span><span style="color:#0000ff">if</span><span style="color:#000"> [Suma] &lt; </span><span style="color:#098658">200</span><span style="color:#000"> </span><span style="color:#0000ff">then</span><span style="color:#000"> </span><span style="color:#a31515">"Bajo"</span><span style="color:#000"> </span><span style="color:#0000ff">else</span><span style="color:#000"> </span><span style="color:#a31515">" Alto"</span><span style="color:#000">)</span></span>
<svg class="r" style="left:1627px;top:157px;" width="14" height="10" viewBox="0 0 14 10"><path d="M1.800 1.800l5.200 5.200 5.200-5.200" fill="none" stroke="#444" stroke-width="1.800"/></svg>
<div class="r" style="left:238px;top:181px;width:1309.5px;height:21px;background:#f3f2f1;"></div>
<div class="r" style="left:267.5px;top:205.5px;width:1120px;height:812.5px;background:#fff;"></div>
<div class="r" style="left:1387.5px;top:205.5px;width:160px;height:812.5px;background:#e6e6e6;"></div>
<div class="r" style="left:238px;top:205.5px;width:29.5px;height:812.5px;background:#f3f2f1;"></div>
<div class="r" style="left:1387.5px;top:181px;width:160px;height:21px;background:#f2c811;"></div>
<div class="r" style="left:267.5px;top:201.9px;width:1280px;height:3.7px;background:#01b8aa;"></div>
<div class="r" style="left:238px;top:180px;width:1309.5px;height:1px;background:#d4d3d2;"></div>
<div class="r" style="left:238px;top:180px;width:1px;height:838.5px;background:#d4d3d2;"></div>
<div class="r" style="left:267.0px;top:180px;width:1px;height:838.5px;background:#d4d3d2;"></div>
<div class="r" style="left:427.0px;top:180px;width:1px;height:838.5px;background:#d4d3d2;"></div>
<div class="r" style="left:587.0px;top:180px;width:1px;height:838.5px;background:#d4d3d2;"></div>
<div class="r" style="left:747.0px;top:180px;width:1px;height:838.5px;background:#d4d3d2;"></div>
<div class="r" style="left:907.0px;top:180px;width:1px;height:838.5px;background:#d4d3d2;"></div>
<div class="r" style="left:1067.0px;top:180px;width:1px;height:838.5px;background:#d4d3d2;"></div>
<div class="r" style="left:1227.0px;top:180px;width:1px;height:838.5px;background:#d4d3d2;"></div>
<div class="r" style="left:1387.0px;top:180px;width:1px;height:838.5px;background:#cfcecd;"></div>
<div class="r" style="left:1547.0px;top:180px;width:1px;height:838.5px;background:#cfcecd;"></div>
<div class="r" style="left:238px;top:226.0px;width:1309.5px;height:1px;background:#d4d3d2;"></div>
<div class="r" style="left:238px;top:247.0px;width:1309.5px;height:1px;background:#d4d3d2;"></div>
<div class="r" style="left:238px;top:268.0px;width:1309.5px;height:1px;background:#d4d3d2;"></div>
<div class="r" style="left:238px;top:289.0px;width:1309.5px;height:1px;background:#d4d3d2;"></div>
<div class="r" style="left:238px;top:310.0px;width:1309.5px;height:1px;background:#d4d3d2;"></div>
<div class="r" style="left:238px;top:331.0px;width:1309.5px;height:1px;background:#d4d3d2;"></div>
<div class="r" style="left:238px;top:352.0px;width:1309.5px;height:1px;background:#d4d3d2;"></div>
<div class="r" style="left:238px;top:373.0px;width:1309.5px;height:1px;background:#d4d3d2;"></div>
<div class="r" style="left:238px;top:394.0px;width:1309.5px;height:1px;background:#d4d3d2;"></div>
<div class="r" style="left:238px;top:415.0px;width:1309.5px;height:1px;background:#d4d3d2;"></div>
<div class="r" style="left:238px;top:436.0px;width:1309.5px;height:1px;background:#d4d3d2;"></div>
<div class="r" style="left:238px;top:457.0px;width:1309.5px;height:1px;background:#d4d3d2;"></div>
<div class="r" style="left:238px;top:478.0px;width:1309.5px;height:1px;background:#d4d3d2;"></div>
<div class="r" style="left:238px;top:499.0px;width:1309.5px;height:1px;background:#d4d3d2;"></div>
<div class="r" style="left:238px;top:520.0px;width:1309.5px;height:1px;background:#d4d3d2;"></div>
<div class="r" style="left:238px;top:541.0px;width:1309.5px;height:1px;background:#d4d3d2;"></div>
<div class="r" style="left:238px;top:562.0px;width:1309.5px;height:1px;background:#d4d3d2;"></div>
<div class="r" style="left:238px;top:583.0px;width:1309.5px;height:1px;background:#d4d3d2;"></div>
<div class="r" style="left:238px;top:604.0px;width:1309.5px;height:1px;background:#d4d3d2;"></div>
<div class="r" style="left:238px;top:625.0px;width:1309.5px;height:1px;background:#d4d3d2;"></div>
<div class="r" style="left:238px;top:646.0px;width:1309.5px;height:1px;background:#d4d3d2;"></div>
<div class="r" style="left:238px;top:667.0px;width:1309.5px;height:1px;background:#d4d3d2;"></div>
<div class="r" style="left:238px;top:688.0px;width:1309.5px;height:1px;background:#d4d3d2;"></div>
<div class="r" style="left:238px;top:709.0px;width:1309.5px;height:1px;background:#d4d3d2;"></div>
<div class="r" style="left:238px;top:730.0px;width:1309.5px;height:1px;background:#d4d3d2;"></div>
<div class="r" style="left:238px;top:751.0px;width:1309.5px;height:1px;background:#d4d3d2;"></div>
<div class="r" style="left:238px;top:772.0px;width:1309.5px;height:1px;background:#d4d3d2;"></div>
<div class="r" style="left:238px;top:793.0px;width:1309.5px;height:1px;background:#d4d3d2;"></div>
<div class="r" style="left:238px;top:814.0px;width:1309.5px;height:1px;background:#d4d3d2;"></div>
<div class="r" style="left:238px;top:835.0px;width:1309.5px;height:1px;background:#d4d3d2;"></div>
<div class="r" style="left:238px;top:856.0px;width:1309.5px;height:1px;background:#d4d3d2;"></div>
<div class="r" style="left:238px;top:877.0px;width:1309.5px;height:1px;background:#d4d3d2;"></div>
<div class="r" style="left:238px;top:898.0px;width:1309.5px;height:1px;background:#d4d3d2;"></div>
<div class="r" style="left:238px;top:919.0px;width:1309.5px;height:1px;background:#d4d3d2;"></div>
<div class="r" style="left:238px;top:940.0px;width:1309.5px;height:1px;background:#d4d3d2;"></div>
<div class="r" style="left:238px;top:961.0px;width:1309.5px;height:1px;background:#d4d3d2;"></div>
<div class="r" style="left:238px;top:982.0px;width:1309.5px;height:1px;background:#d4d3d2;"></div>
<div class="r" style="left:238px;top:1003.0px;width:1309.5px;height:1px;background:#d4d3d2;"></div>
<div class="r" style="left:238px;top:205px;width:29.5px;height:1px;background:#d4d3d2;"></div>
<div class="r" style="left:238px;top:201px;width:29.5px;height:1px;background:#d4d3d2;"></div>
<div class="r" style="left:267.5px;top:201px;width:1280px;height:1px;background:#f3e9e6;"></div>
<svg class="r" style="left:244px;top:185px;" width="20" height="12" viewBox="0 0 20 12"><rect x="0.5" y="0.5" width="12" height="10.500" fill="#fff" stroke="#6a6a6a"/><rect x="0" y="0" width="13" height="2.600" fill="#3b78c6"/>
      <path d="M0.500 5.400h12M0.500 8.200h12M4.500 2.600v8.400M8.500 2.600v8.400" stroke="#8a8a8a" stroke-width="0.900" fill="none"/><path d="M14.300 8h5l-2.500 2.800z" fill="#555"/></svg>
<span class="t" style="top:184.00px;font-size:13.2px;left:270.00px;letter-spacing:-0.783px;color:#555;">1.2</span>
<span class="t" style="top:187.00px;font-size:10.2px;left:292.30px;letter-spacing:0.153px;color:#555;font-weight:bold;">Nfactura</span>
<div class="r" style="left:409.0px;top:183px;width:16px;height:16px;background:#fff;border:1px solid #ababab;box-sizing:border-box;"></div>
<svg class="r" style="left:413.5px;top:189px;" width="7" height="4" viewBox="0 0 7 4"><path d="M0 0h7l-3.500 3.500z" fill="#666"/></svg>
<span class="t" style="top:187.00px;font-size:10.8px;left:430.30px;color:#444;">A</span>
<span class="t" style="top:183.00px;font-size:8.8px;left:436.90px;color:#333;">B</span>
<span class="t" style="top:191.00px;font-size:8.8px;left:440.70px;color:#333;">C</span>
<span class="t" style="top:187.00px;font-size:10.2px;left:452.30px;letter-spacing:0.110px;color:#555;font-weight:bold;">Serie</span>
<div class="r" style="left:569.0px;top:183px;width:16px;height:16px;background:#fff;border:1px solid #ababab;box-sizing:border-box;"></div>
<svg class="r" style="left:573.5px;top:189px;" width="7" height="4" viewBox="0 0 7 4"><path d="M0 0h7l-3.500 3.500z" fill="#666"/></svg>
<span class="t" style="top:184.00px;font-size:13.2px;left:590.00px;letter-spacing:-0.783px;color:#555;">1.2</span>
<span class="t" style="top:187.00px;font-size:10.2px;left:612.30px;letter-spacing:-0.438px;color:#555;font-weight:bold;">CODART</span>
<div class="r" style="left:729.0px;top:183px;width:16px;height:16px;background:#fff;border:1px solid #ababab;box-sizing:border-box;"></div>
<svg class="r" style="left:733.5px;top:189px;" width="7" height="4" viewBox="0 0 7 4"><path d="M0 0h7l-3.500 3.500z" fill="#666"/></svg>
<span class="t" style="top:184.00px;font-size:13.2px;left:750.00px;letter-spacing:-0.783px;color:#555;">1.2</span>
<span class="t" style="top:187.00px;font-size:10.2px;left:772.30px;letter-spacing:0.099px;color:#555;font-weight:bold;">Unidades</span>
<div class="r" style="left:889.0px;top:183px;width:16px;height:16px;background:#fff;border:1px solid #ababab;box-sizing:border-box;"></div>
<svg class="r" style="left:893.5px;top:189px;" width="7" height="4" viewBox="0 0 7 4"><path d="M0 0h7l-3.500 3.500z" fill="#666"/></svg>
<span class="t" style="top:184.00px;font-size:13.2px;left:910.00px;letter-spacing:-0.783px;color:#555;">1.2</span>
<span class="t" style="top:187.00px;font-size:10.2px;left:932.30px;letter-spacing:-0.030px;color:#555;font-weight:bold;">Precio</span>
<div class="r" style="left:1049.0px;top:183px;width:16px;height:16px;background:#fff;border:1px solid #ababab;box-sizing:border-box;"></div>
<svg class="r" style="left:1053.5px;top:189px;" width="7" height="4" viewBox="0 0 7 4"><path d="M0 0h7l-3.500 3.500z" fill="#666"/></svg>
<span class="t" style="top:184.00px;font-size:13.2px;left:1070.00px;letter-spacing:-0.783px;color:#555;">1.2</span>
<span class="t" style="top:187.00px;font-size:10.2px;left:1092.30px;letter-spacing:-0.179px;color:#555;font-weight:bold;">Costo</span>
<div class="r" style="left:1209.0px;top:183px;width:16px;height:16px;background:#fff;border:1px solid #ababab;box-sizing:border-box;"></div>
<svg class="r" style="left:1213.5px;top:189px;" width="7" height="4" viewBox="0 0 7 4"><path d="M0 0h7l-3.500 3.500z" fill="#666"/></svg>
<span class="t" style="top:184.00px;font-size:7.5px;left:1230.20px;letter-spacing:0.060px;color:#444;">ABC</span>
<span class="t" style="top:191.00px;font-size:9.3px;left:1230.00px;letter-spacing:0.261px;color:#444;">123</span>
<span class="t" style="top:187.00px;font-size:10.2px;left:1252.30px;letter-spacing:-0.094px;color:#555;font-weight:bold;">Suma</span>
<div class="r" style="left:1369.0px;top:183px;width:16px;height:16px;background:#fff;border:1px solid #ababab;box-sizing:border-box;"></div>
<svg class="r" style="left:1373.5px;top:189px;" width="7" height="4" viewBox="0 0 7 4"><path d="M0 0h7l-3.500 3.500z" fill="#666"/></svg>
<span class="t" style="top:184.00px;font-size:7.5px;left:1390.20px;letter-spacing:0.060px;color:#6b5a00;">ABC</span>
<span class="t" style="top:191.00px;font-size:9.3px;left:1390.00px;letter-spacing:0.261px;color:#6b5a00;">123</span>
<span class="t" style="top:187.00px;font-size:10.2px;left:1412.30px;letter-spacing:-0.033px;font-weight:bold;">Condicional</span>
<div class="r" style="left:1529.0px;top:183px;width:16px;height:16px;background:#fff;border:1px solid #ababab;box-sizing:border-box;"></div>
<svg class="r" style="left:1533.5px;top:189px;" width="7" height="4" viewBox="0 0 7 4"><path d="M0 0h7l-3.500 3.500z" fill="#666"/></svg>
<span class="t" style="top:211.00px;font-size:12px;left:249.66px;color:#555;">1</span>
<span class="t" style="top:211.00px;font-size:11px;left:417.88px;font-style:italic;">1</span>
<span class="t" style="top:211.00px;font-size:11px;left:431.00px;letter-spacing:-0.727px;">S2</span>
<span class="t" style="top:211.00px;font-size:11px;left:737.88px;font-style:italic;">1</span>
<span class="t" style="top:211.00px;font-size:11px;left:897.88px;font-style:italic;">8</span>
<span class="t" style="top:211.00px;font-size:11px;left:1031.08px;letter-spacing:-0.120px;font-style:italic;">551,02</span>
<span class="t" style="top:211.00px;font-size:11px;left:1191.08px;letter-spacing:-0.120px;font-style:italic;">418,78</span>
<span class="t" style="top:211.00px;font-size:11px;left:1357.07px;letter-spacing:-0.120px;font-style:italic;">969,8</span>
<span class="t" style="top:211.00px;font-size:11px;left:1394.00px;letter-spacing:0.061px;">Alto</span>
<span class="t" style="top:232.00px;font-size:12px;left:249.66px;color:#555;">2</span>
<span class="t" style="top:232.00px;font-size:11px;left:417.88px;font-style:italic;">2</span>
<span class="t" style="top:232.00px;font-size:11px;left:431.00px;letter-spacing:-0.727px;">S2</span>
<span class="t" style="top:232.00px;font-size:11px;left:737.88px;font-style:italic;">2</span>
<span class="t" style="top:232.00px;font-size:11px;left:892.00px;letter-spacing:-0.120px;font-style:italic;">22</span>
<span class="t" style="top:232.00px;font-size:11px;left:1031.89px;letter-spacing:-0.120px;font-style:italic;">116,99</span>
<span class="t" style="top:232.00px;font-size:11px;left:1197.07px;letter-spacing:-0.120px;font-style:italic;">98,27</span>
<span class="t" style="top:232.00px;font-size:11px;left:1351.08px;letter-spacing:-0.120px;font-style:italic;">215,26</span>
<span class="t" style="top:232.00px;font-size:11px;left:1394.00px;letter-spacing:0.061px;">Alto</span>
<span class="t" style="top:253.00px;font-size:12px;left:249.66px;color:#555;">3</span>
<span class="t" style="top:253.00px;font-size:11px;left:417.88px;font-style:italic;">3</span>
<span class="t" style="top:253.00px;font-size:11px;left:431.00px;letter-spacing:-0.727px;">S2</span>
<span class="t" style="top:253.00px;font-size:11px;left:737.88px;font-style:italic;">5</span>
<span class="t" style="top:253.00px;font-size:11px;left:892.00px;letter-spacing:-0.120px;font-style:italic;">22</span>
<span class="t" style="top:253.00px;font-size:11px;left:1031.08px;letter-spacing:-0.120px;font-style:italic;">494,99</span>
<span class="t" style="top:253.00px;font-size:11px;left:1191.08px;letter-spacing:-0.120px;font-style:italic;">391,04</span>
<span class="t" style="top:253.00px;font-size:11px;left:1351.08px;letter-spacing:-0.120px;font-style:italic;">886,03</span>
<span class="t" style="top:253.00px;font-size:11px;left:1394.00px;letter-spacing:0.061px;">Alto</span>
<span class="t" style="top:274.00px;font-size:12px;left:249.66px;color:#555;">4</span>
<span class="t" style="top:274.00px;font-size:11px;left:417.88px;font-style:italic;">4</span>
<span class="t" style="top:274.00px;font-size:11px;left:431.00px;letter-spacing:-0.727px;">S2</span>
<span class="t" style="top:274.00px;font-size:11px;left:737.88px;font-style:italic;">7</span>
<span class="t" style="top:274.00px;font-size:11px;left:892.00px;letter-spacing:-0.120px;font-style:italic;">22</span>
<span class="t" style="top:274.00px;font-size:11px;left:1037.07px;letter-spacing:-0.120px;font-style:italic;">53,99</span>
<span class="t" style="top:274.00px;font-size:11px;left:1197.07px;letter-spacing:-0.120px;font-style:italic;">45,35</span>
<span class="t" style="top:274.00px;font-size:11px;left:1357.07px;letter-spacing:-0.120px;font-style:italic;">99,34</span>
<span class="t" style="top:274.00px;font-size:11px;left:1391.00px;letter-spacing:-0.354px;">Bajo</span>
<span class="t" style="top:295.00px;font-size:12px;left:249.66px;color:#555;">5</span>
<span class="t" style="top:295.00px;font-size:11px;left:417.88px;font-style:italic;">5</span>
<span class="t" style="top:295.00px;font-size:11px;left:431.00px;letter-spacing:-0.727px;">S2</span>
<span class="t" style="top:295.00px;font-size:11px;left:732.82px;letter-spacing:-0.120px;font-style:italic;">11</span>
<span class="t" style="top:295.00px;font-size:11px;left:892.00px;letter-spacing:-0.120px;font-style:italic;">22</span>
<span class="t" style="top:295.00px;font-size:11px;left:1031.08px;letter-spacing:-0.120px;font-style:italic;">539,99</span>
<span class="t" style="top:295.00px;font-size:11px;left:1191.08px;letter-spacing:-0.120px;font-style:italic;">426,59</span>
<span class="t" style="top:295.00px;font-size:11px;left:1351.08px;letter-spacing:-0.120px;font-style:italic;">966,58</span>
<span class="t" style="top:295.00px;font-size:11px;left:1394.00px;letter-spacing:0.061px;">Alto</span>
<span class="t" style="top:316.00px;font-size:12px;left:249.66px;color:#555;">6</span>
<span class="t" style="top:316.00px;font-size:11px;left:417.88px;font-style:italic;">6</span>
<span class="t" style="top:316.00px;font-size:11px;left:431.00px;letter-spacing:-0.727px;">S2</span>
<span class="t" style="top:316.00px;font-size:11px;left:732.00px;letter-spacing:-0.120px;font-style:italic;">10</span>
<span class="t" style="top:316.00px;font-size:11px;left:897.88px;font-style:italic;">6</span>
<span class="t" style="top:316.00px;font-size:11px;left:1031.08px;letter-spacing:-0.120px;font-style:italic;">215,99</span>
<span class="t" style="top:316.00px;font-size:11px;left:1191.08px;letter-spacing:-0.120px;font-style:italic;">183,59</span>
<span class="t" style="top:316.00px;font-size:11px;left:1351.08px;letter-spacing:-0.120px;font-style:italic;">399,58</span>
<span class="t" style="top:316.00px;font-size:11px;left:1394.00px;letter-spacing:0.061px;">Alto</span>
<span class="t" style="top:337.00px;font-size:12px;left:249.66px;color:#555;">7</span>
<span class="t" style="top:337.00px;font-size:11px;left:417.88px;font-style:italic;">7</span>
<span class="t" style="top:337.00px;font-size:11px;left:431.00px;letter-spacing:-0.727px;">S2</span>
<span class="t" style="top:358.00px;font-size:12px;left:249.66px;color:#555;">8</span>
<span class="t" style="top:358.00px;font-size:11px;left:417.88px;font-style:italic;">8</span>
<span class="t" style="top:358.00px;font-size:11px;left:431.00px;letter-spacing:-0.727px;">S2</span>
<span class="t" style="top:379.00px;font-size:12px;left:249.66px;color:#555;">9</span>
<span class="t" style="top:379.00px;font-size:11px;left:417.88px;font-style:italic;">9</span>
<span class="t" style="top:379.00px;font-size:11px;left:431.00px;letter-spacing:-0.727px;">S2</span>
<span class="t" style="top:400.00px;font-size:12px;left:246.68px;letter-spacing:-0.350px;color:#555;">10</span>
<span class="t" style="top:400.00px;font-size:11px;left:412.00px;letter-spacing:-0.120px;font-style:italic;">10</span>
<span class="t" style="top:400.00px;font-size:11px;left:431.00px;letter-spacing:-0.727px;">S2</span>
<span class="t" style="top:421.00px;font-size:12px;left:247.12px;letter-spacing:-0.350px;color:#555;">11</span>
<span class="t" style="top:421.00px;font-size:11px;left:412.82px;letter-spacing:-0.120px;font-style:italic;">11</span>
<span class="t" style="top:421.00px;font-size:11px;left:431.00px;letter-spacing:-0.727px;">S2</span>
<span class="t" style="top:442.00px;font-size:12px;left:246.68px;letter-spacing:-0.350px;color:#555;">12</span>
<span class="t" style="top:442.00px;font-size:11px;left:412.00px;letter-spacing:-0.120px;font-style:italic;">12</span>
<span class="t" style="top:442.00px;font-size:11px;left:431.00px;letter-spacing:-0.727px;">S2</span>
<span class="t" style="top:463.00px;font-size:12px;left:246.68px;letter-spacing:-0.350px;color:#555;">13</span>
<span class="t" style="top:463.00px;font-size:11px;left:412.00px;letter-spacing:-0.120px;font-style:italic;">13</span>
<span class="t" style="top:463.00px;font-size:11px;left:431.00px;letter-spacing:-0.727px;">S2</span>
<span class="t" style="top:484.00px;font-size:12px;left:246.68px;letter-spacing:-0.350px;color:#555;">14</span>
<span class="t" style="top:484.00px;font-size:11px;left:412.00px;letter-spacing:-0.120px;font-style:italic;">14</span>
<span class="t" style="top:484.00px;font-size:11px;left:431.00px;letter-spacing:-0.727px;">S2</span>
<span class="t" style="top:505.00px;font-size:12px;left:246.68px;letter-spacing:-0.350px;color:#555;">15</span>
<span class="t" style="top:505.00px;font-size:11px;left:412.00px;letter-spacing:-0.120px;font-style:italic;">15</span>
<span class="t" style="top:505.00px;font-size:11px;left:431.00px;letter-spacing:-0.727px;">S2</span>
<span class="t" style="top:526.00px;font-size:12px;left:246.68px;letter-spacing:-0.350px;color:#555;">16</span>
<span class="t" style="top:526.00px;font-size:11px;left:412.00px;letter-spacing:-0.120px;font-style:italic;">16</span>
<span class="t" style="top:526.00px;font-size:11px;left:431.00px;letter-spacing:-0.727px;">S2</span>
<span class="t" style="top:547.00px;font-size:12px;left:246.68px;letter-spacing:-0.350px;color:#555;">17</span>
<span class="t" style="top:547.00px;font-size:11px;left:412.00px;letter-spacing:-0.120px;font-style:italic;">17</span>
<span class="t" style="top:547.00px;font-size:11px;left:431.00px;letter-spacing:-0.727px;">S2</span>
<span class="t" style="top:568.00px;font-size:12px;left:246.68px;letter-spacing:-0.350px;color:#555;">18</span>
<span class="t" style="top:568.00px;font-size:11px;left:412.00px;letter-spacing:-0.120px;font-style:italic;">18</span>
<span class="t" style="top:568.00px;font-size:11px;left:431.00px;letter-spacing:-0.727px;">S2</span>
<span class="t" style="top:589.00px;font-size:12px;left:246.68px;letter-spacing:-0.350px;color:#555;">19</span>
<span class="t" style="top:589.00px;font-size:11px;left:412.00px;letter-spacing:-0.120px;font-style:italic;">19</span>
<span class="t" style="top:589.00px;font-size:11px;left:431.00px;letter-spacing:-0.727px;">S2</span>
<span class="t" style="top:610.00px;font-size:12px;left:246.68px;letter-spacing:-0.350px;color:#555;">20</span>
<span class="t" style="top:610.00px;font-size:11px;left:412.00px;letter-spacing:-0.120px;font-style:italic;">20</span>
<span class="t" style="top:610.00px;font-size:11px;left:431.00px;letter-spacing:-0.727px;">S2</span>
<span class="t" style="top:631.00px;font-size:12px;left:246.68px;letter-spacing:-0.350px;color:#555;">21</span>
<span class="t" style="top:631.00px;font-size:11px;left:412.00px;letter-spacing:-0.120px;font-style:italic;">21</span>
<span class="t" style="top:631.00px;font-size:11px;left:431.00px;letter-spacing:-0.727px;">S2</span>
<span class="t" style="top:652.00px;font-size:12px;left:246.68px;letter-spacing:-0.350px;color:#555;">22</span>
<span class="t" style="top:652.00px;font-size:11px;left:412.00px;letter-spacing:-0.120px;font-style:italic;">22</span>
<span class="t" style="top:652.00px;font-size:11px;left:431.00px;letter-spacing:-0.727px;">S2</span>
<span class="t" style="top:673.00px;font-size:12px;left:246.68px;letter-spacing:-0.350px;color:#555;">23</span>
<span class="t" style="top:673.00px;font-size:11px;left:412.00px;letter-spacing:-0.120px;font-style:italic;">23</span>
<span class="t" style="top:673.00px;font-size:11px;left:431.00px;letter-spacing:-0.727px;">S2</span>
<span class="t" style="top:694.00px;font-size:12px;left:246.68px;letter-spacing:-0.350px;color:#555;">24</span>
<span class="t" style="top:694.00px;font-size:11px;left:412.00px;letter-spacing:-0.120px;font-style:italic;">24</span>
<span class="t" style="top:694.00px;font-size:11px;left:431.00px;letter-spacing:-0.727px;">S2</span>
<span class="t" style="top:715.00px;font-size:12px;left:246.68px;letter-spacing:-0.350px;color:#555;">25</span>
<span class="t" style="top:715.00px;font-size:11px;left:412.00px;letter-spacing:-0.120px;font-style:italic;">25</span>
<span class="t" style="top:715.00px;font-size:11px;left:431.00px;letter-spacing:-0.727px;">S2</span>
<span class="t" style="top:715.00px;font-size:11px;left:732.00px;letter-spacing:-0.120px;font-style:italic;">15</span>
<span class="t" style="top:715.00px;font-size:11px;left:892.00px;letter-spacing:-0.120px;font-style:italic;">24</span>
<span class="t" style="top:715.00px;font-size:11px;left:1037.07px;letter-spacing:-0.120px;font-style:italic;">54,23</span>
<span class="t" style="top:715.00px;font-size:11px;left:1197.07px;letter-spacing:-0.120px;font-style:italic;">54,23</span>
<span class="t" style="top:715.00px;font-size:11px;left:1351.08px;letter-spacing:-0.120px;font-style:italic;">108,46</span>
<span class="t" style="top:715.00px;font-size:11px;left:1391.00px;letter-spacing:-0.354px;">Bajo</span>
<span class="t" style="top:736.00px;font-size:12px;left:246.68px;letter-spacing:-0.350px;color:#555;">26</span>
<span class="t" style="top:736.00px;font-size:11px;left:412.00px;letter-spacing:-0.120px;font-style:italic;">26</span>
<span class="t" style="top:736.00px;font-size:11px;left:431.00px;letter-spacing:-0.727px;">S2</span>
<span class="t" style="top:736.00px;font-size:11px;left:737.88px;font-style:italic;">1</span>
<span class="t" style="top:736.00px;font-size:11px;left:892.00px;letter-spacing:-0.120px;font-style:italic;">14</span>
<span class="t" style="top:736.00px;font-size:11px;left:1031.08px;letter-spacing:-0.120px;font-style:italic;">612,25</span>
<span class="t" style="top:736.00px;font-size:11px;left:1191.08px;letter-spacing:-0.120px;font-style:italic;">612,25</span>
<span class="t" style="top:736.00px;font-size:11px;left:1351.08px;letter-spacing:-0.120px;font-style:italic;">1224,5</span>
<span class="t" style="top:736.00px;font-size:11px;left:1394.00px;letter-spacing:0.061px;">Alto</span>
<span class="t" style="top:757.00px;font-size:12px;left:246.68px;letter-spacing:-0.350px;color:#555;">27</span>
<span class="t" style="top:757.00px;font-size:11px;left:412.00px;letter-spacing:-0.120px;font-style:italic;">27</span>
<span class="t" style="top:757.00px;font-size:11px;left:431.00px;letter-spacing:-0.727px;">S2</span>
<span class="t" style="top:757.00px;font-size:11px;left:737.88px;font-style:italic;">2</span>
<span class="t" style="top:757.00px;font-size:11px;left:892.00px;letter-spacing:-0.120px;font-style:italic;">14</span>
<span class="t" style="top:757.00px;font-size:11px;left:1031.08px;letter-spacing:-0.120px;font-style:italic;">129,99</span>
<span class="t" style="top:757.00px;font-size:11px;left:1191.08px;letter-spacing:-0.120px;font-style:italic;">129,99</span>
<span class="t" style="top:757.00px;font-size:11px;left:1351.08px;letter-spacing:-0.120px;font-style:italic;">259,98</span>
<span class="t" style="top:757.00px;font-size:11px;left:1394.00px;letter-spacing:0.061px;">Alto</span>
<span class="t" style="top:778.00px;font-size:12px;left:246.68px;letter-spacing:-0.350px;color:#555;">28</span>
<span class="t" style="top:778.00px;font-size:11px;left:412.00px;letter-spacing:-0.120px;font-style:italic;">28</span>
<span class="t" style="top:778.00px;font-size:11px;left:431.00px;letter-spacing:-0.727px;">S2</span>
<span class="t" style="top:778.00px;font-size:11px;left:737.88px;font-style:italic;">8</span>
<span class="t" style="top:778.00px;font-size:11px;left:897.88px;font-style:italic;">6</span>
<span class="t" style="top:778.00px;font-size:11px;left:1031.08px;letter-spacing:-0.120px;font-style:italic;">179,99</span>
<span class="t" style="top:778.00px;font-size:11px;left:1191.08px;letter-spacing:-0.120px;font-style:italic;">179,99</span>
<span class="t" style="top:778.00px;font-size:11px;left:1351.08px;letter-spacing:-0.120px;font-style:italic;">359,98</span>
<span class="t" style="top:778.00px;font-size:11px;left:1394.00px;letter-spacing:0.061px;">Alto</span>
<span class="t" style="top:799.00px;font-size:12px;left:246.68px;letter-spacing:-0.350px;color:#555;">29</span>
<span class="t" style="top:799.00px;font-size:11px;left:412.00px;letter-spacing:-0.120px;font-style:italic;">29</span>
<span class="t" style="top:799.00px;font-size:11px;left:431.00px;letter-spacing:-0.727px;">S2</span>
<span class="t" style="top:799.00px;font-size:11px;left:732.82px;letter-spacing:-0.120px;font-style:italic;">11</span>
<span class="t" style="top:799.00px;font-size:11px;left:897.88px;font-style:italic;">6</span>
<span class="t" style="top:799.00px;font-size:11px;left:1031.08px;letter-spacing:-0.120px;font-style:italic;">599,99</span>
<span class="t" style="top:799.00px;font-size:11px;left:1191.08px;letter-spacing:-0.120px;font-style:italic;">599,99</span>
<span class="t" style="top:799.00px;font-size:11px;left:1345.89px;letter-spacing:-0.120px;font-style:italic;">1199,98</span>
<span class="t" style="top:799.00px;font-size:11px;left:1394.00px;letter-spacing:0.061px;">Alto</span>
<span class="t" style="top:820.00px;font-size:12px;left:246.68px;letter-spacing:-0.350px;color:#555;">30</span>
<span class="t" style="top:820.00px;font-size:11px;left:412.00px;letter-spacing:-0.120px;font-style:italic;">30</span>
<span class="t" style="top:820.00px;font-size:11px;left:431.00px;letter-spacing:-0.727px;">S2</span>
<span class="t" style="top:820.00px;font-size:11px;left:732.00px;letter-spacing:-0.120px;font-style:italic;">15</span>
<span class="t" style="top:820.00px;font-size:11px;left:892.00px;letter-spacing:-0.120px;font-style:italic;">32</span>
<span class="t" style="top:820.00px;font-size:11px;left:1037.07px;letter-spacing:-0.120px;font-style:italic;">54,23</span>
<span class="t" style="top:820.00px;font-size:11px;left:1197.07px;letter-spacing:-0.120px;font-style:italic;">54,23</span>
<span class="t" style="top:820.00px;font-size:11px;left:1351.08px;letter-spacing:-0.120px;font-style:italic;">108,46</span>
<span class="t" style="top:820.00px;font-size:11px;left:1391.00px;letter-spacing:-0.354px;">Bajo</span>
<span class="t" style="top:841.00px;font-size:12px;left:246.68px;letter-spacing:-0.350px;color:#555;">31</span>
<span class="t" style="top:841.00px;font-size:11px;left:412.00px;letter-spacing:-0.120px;font-style:italic;">31</span>
<span class="t" style="top:841.00px;font-size:11px;left:431.00px;letter-spacing:-0.727px;">S2</span>
<span class="t" style="top:841.00px;font-size:11px;left:737.88px;font-style:italic;">1</span>
<span class="t" style="top:841.00px;font-size:11px;left:892.00px;letter-spacing:-0.120px;font-style:italic;">19</span>
<span class="t" style="top:841.00px;font-size:11px;left:1031.08px;letter-spacing:-0.120px;font-style:italic;">612,25</span>
<span class="t" style="top:841.00px;font-size:11px;left:1191.08px;letter-spacing:-0.120px;font-style:italic;">612,25</span>
<span class="t" style="top:841.00px;font-size:11px;left:1351.08px;letter-spacing:-0.120px;font-style:italic;">1224,5</span>
<span class="t" style="top:841.00px;font-size:11px;left:1394.00px;letter-spacing:0.061px;">Alto</span>
<span class="t" style="top:862.00px;font-size:12px;left:246.68px;letter-spacing:-0.350px;color:#555;">32</span>
<span class="t" style="top:862.00px;font-size:11px;left:412.00px;letter-spacing:-0.120px;font-style:italic;">32</span>
<span class="t" style="top:862.00px;font-size:11px;left:431.00px;letter-spacing:-0.727px;">S2</span>
<span class="t" style="top:862.00px;font-size:11px;left:737.88px;font-style:italic;">2</span>
<span class="t" style="top:862.00px;font-size:11px;left:892.00px;letter-spacing:-0.120px;font-style:italic;">21</span>
<span class="t" style="top:862.00px;font-size:11px;left:1031.08px;letter-spacing:-0.120px;font-style:italic;">129,99</span>
<span class="t" style="top:862.00px;font-size:11px;left:1191.08px;letter-spacing:-0.120px;font-style:italic;">129,99</span>
<span class="t" style="top:862.00px;font-size:11px;left:1351.08px;letter-spacing:-0.120px;font-style:italic;">259,98</span>
<span class="t" style="top:862.00px;font-size:11px;left:1394.00px;letter-spacing:0.061px;">Alto</span>
<span class="t" style="top:883.00px;font-size:12px;left:246.68px;letter-spacing:-0.350px;color:#555;">33</span>
<span class="t" style="top:883.00px;font-size:11px;left:412.00px;letter-spacing:-0.120px;font-style:italic;">33</span>
<span class="t" style="top:883.00px;font-size:11px;left:431.00px;letter-spacing:-0.727px;">S2</span>
<span class="t" style="top:883.00px;font-size:11px;left:737.88px;font-style:italic;">6</span>
<span class="t" style="top:883.00px;font-size:11px;left:892.00px;letter-spacing:-0.120px;font-style:italic;">14</span>
<span class="t" style="top:883.00px;font-size:11px;left:1037.07px;letter-spacing:-0.120px;font-style:italic;">49,99</span>
<span class="t" style="top:883.00px;font-size:11px;left:1197.07px;letter-spacing:-0.120px;font-style:italic;">49,99</span>
<span class="t" style="top:883.00px;font-size:11px;left:1357.07px;letter-spacing:-0.120px;font-style:italic;">99,98</span>
<span class="t" style="top:883.00px;font-size:11px;left:1391.00px;letter-spacing:-0.354px;">Bajo</span>
<span class="t" style="top:904.00px;font-size:12px;left:246.68px;letter-spacing:-0.350px;color:#555;">34</span>
<span class="t" style="top:904.00px;font-size:11px;left:412.00px;letter-spacing:-0.120px;font-style:italic;">34</span>
<span class="t" style="top:904.00px;font-size:11px;left:431.00px;letter-spacing:-0.727px;">S2</span>
<span class="t" style="top:904.00px;font-size:11px;left:732.82px;letter-spacing:-0.120px;font-style:italic;">11</span>
<span class="t" style="top:904.00px;font-size:11px;left:897.88px;font-style:italic;">4</span>
<span class="t" style="top:904.00px;font-size:11px;left:1031.08px;letter-spacing:-0.120px;font-style:italic;">599,99</span>
<span class="t" style="top:904.00px;font-size:11px;left:1191.08px;letter-spacing:-0.120px;font-style:italic;">599,99</span>
<span class="t" style="top:904.00px;font-size:11px;left:1345.89px;letter-spacing:-0.120px;font-style:italic;">1199,98</span>
<span class="t" style="top:904.00px;font-size:11px;left:1394.00px;letter-spacing:0.061px;">Alto</span>
<span class="t" style="top:925.00px;font-size:12px;left:246.68px;letter-spacing:-0.350px;color:#555;">35</span>
<span class="t" style="top:925.00px;font-size:11px;left:412.00px;letter-spacing:-0.120px;font-style:italic;">35</span>
<span class="t" style="top:925.00px;font-size:11px;left:431.00px;letter-spacing:-0.727px;">S2</span>
<span class="t" style="top:925.00px;font-size:11px;left:732.00px;letter-spacing:-0.120px;font-style:italic;">12</span>
<span class="t" style="top:925.00px;font-size:11px;left:892.00px;letter-spacing:-0.120px;font-style:italic;">32</span>
<span class="t" style="top:925.00px;font-size:11px;left:1037.07px;letter-spacing:-0.120px;font-style:italic;">47,56</span>
<span class="t" style="top:925.00px;font-size:11px;left:1197.07px;letter-spacing:-0.120px;font-style:italic;">47,56</span>
<span class="t" style="top:925.00px;font-size:11px;left:1357.07px;letter-spacing:-0.120px;font-style:italic;">95,12</span>
<span class="t" style="top:925.00px;font-size:11px;left:1391.00px;letter-spacing:-0.354px;">Bajo</span>
<span class="t" style="top:946.00px;font-size:12px;left:246.68px;letter-spacing:-0.350px;color:#555;">36</span>
<span class="t" style="top:946.00px;font-size:11px;left:412.00px;letter-spacing:-0.120px;font-style:italic;">36</span>
<span class="t" style="top:946.00px;font-size:11px;left:431.00px;letter-spacing:-0.727px;">S2</span>
<span class="t" style="top:946.00px;font-size:11px;left:732.00px;letter-spacing:-0.120px;font-style:italic;">13</span>
<span class="t" style="top:946.00px;font-size:11px;left:892.00px;letter-spacing:-0.120px;font-style:italic;">32</span>
<span class="t" style="top:946.00px;font-size:11px;left:1037.07px;letter-spacing:-0.120px;font-style:italic;">47,99</span>
<span class="t" style="top:946.00px;font-size:11px;left:1197.07px;letter-spacing:-0.120px;font-style:italic;">47,99</span>
<span class="t" style="top:946.00px;font-size:11px;left:1357.07px;letter-spacing:-0.120px;font-style:italic;">95,98</span>
<span class="t" style="top:946.00px;font-size:11px;left:1391.00px;letter-spacing:-0.354px;">Bajo</span>
<span class="t" style="top:967.00px;font-size:12px;left:246.68px;letter-spacing:-0.350px;color:#555;">37</span>
<span class="t" style="top:967.00px;font-size:11px;left:412.00px;letter-spacing:-0.120px;font-style:italic;">37</span>
<span class="t" style="top:967.00px;font-size:11px;left:431.00px;letter-spacing:-0.727px;">S2</span>
<span class="t" style="top:967.00px;font-size:11px;left:732.00px;letter-spacing:-0.120px;font-style:italic;">14</span>
<span class="t" style="top:967.00px;font-size:11px;left:892.00px;letter-spacing:-0.120px;font-style:italic;">32</span>
<span class="t" style="top:967.00px;font-size:11px;left:1037.07px;letter-spacing:-0.120px;font-style:italic;">70,12</span>
<span class="t" style="top:967.00px;font-size:11px;left:1197.07px;letter-spacing:-0.120px;font-style:italic;">70,12</span>
<span class="t" style="top:967.00px;font-size:11px;left:1351.08px;letter-spacing:-0.120px;font-style:italic;">140,24</span>
<span class="t" style="top:967.00px;font-size:11px;left:1391.00px;letter-spacing:-0.354px;">Bajo</span>
<span class="t" style="top:988.00px;font-size:12px;left:246.68px;letter-spacing:-0.350px;color:#555;">38</span>
<span class="t" style="top:988.00px;font-size:11px;left:412.00px;letter-spacing:-0.120px;font-style:italic;">38</span>
<span class="t" style="top:988.00px;font-size:11px;left:431.00px;letter-spacing:-0.727px;">S2</span>
<span class="t" style="top:988.00px;font-size:11px;left:732.00px;letter-spacing:-0.120px;font-style:italic;">15</span>
<span class="t" style="top:988.00px;font-size:11px;left:892.00px;letter-spacing:-0.120px;font-style:italic;">48</span>
<span class="t" style="top:988.00px;font-size:11px;left:1037.07px;letter-spacing:-0.120px;font-style:italic;">54,23</span>
<span class="t" style="top:988.00px;font-size:11px;left:1197.07px;letter-spacing:-0.120px;font-style:italic;">54,23</span>
<span class="t" style="top:988.00px;font-size:11px;left:1351.08px;letter-spacing:-0.120px;font-style:italic;">108,46</span>
<span class="t" style="top:988.00px;font-size:11px;left:1391.00px;letter-spacing:-0.354px;">Bajo</span>
<span class="t" style="top:1009.00px;font-size:12px;left:246.68px;letter-spacing:-0.350px;color:#555;">39</span>
<span class="t" style="top:1009.00px;font-size:11px;left:412.00px;letter-spacing:-0.120px;font-style:italic;">39</span>
<span class="t" style="top:1009.00px;font-size:11px;left:431.00px;letter-spacing:-0.727px;">S2</span>
<span class="t" style="top:1009.00px;font-size:11px;left:737.88px;font-style:italic;">1</span>
<span class="t" style="top:1009.00px;font-size:11px;left:892.00px;letter-spacing:-0.120px;font-style:italic;">32</span>
<span class="t" style="top:1009.00px;font-size:11px;left:1031.08px;letter-spacing:-0.120px;font-style:italic;">581,64</span>
<span class="t" style="top:1009.00px;font-size:11px;left:1191.08px;letter-spacing:-0.120px;font-style:italic;">523,48</span>
<span class="t" style="top:1009.00px;font-size:11px;left:1345.89px;letter-spacing:-0.120px;font-style:italic;">1105,12</span>
<span class="t" style="top:1009.00px;font-size:11px;left:1394.00px;letter-spacing:0.061px;">Alto</span>
<div class="r" style="left:1630px;top:206px;width:17px;height:811px;background:#f0f0f0;"></div>
<div class="r" style="left:1631px;top:240px;width:15px;height:573px;background:#cdcdcd;"></div>
<svg class="r" style="left:1632px;top:221px;" width="13" height="12" viewBox="0 0 13 12"><path d="M1.800 9.700l4.700-5 4.700 5" fill="none" stroke="#606060" stroke-width="2.700"/></svg>
<svg class="r" style="left:1632px;top:989px;" width="13" height="12" viewBox="0 0 13 12"><path d="M1.800 2.300l4.700 5 4.700-5" fill="none" stroke="#606060" stroke-width="2.700"/></svg>
<div class="r" style="left:1651px;top:138px;width:1px;height:880px;background:#d8d7d6;"></div>
<span class="t" style="top:149.00px;font-size:14px;left:1663.00px;letter-spacing:-0.471px;color:#505050;">Query Settings</span>
<svg class="r" style="left:1879px;top:150px;" width="13" height="13" viewBox="0 0 13 13"><path d="M1.500 1.500l10 10M11.500 1.500l-10 10" stroke="#444" stroke-width="1.100" fill="none"/></svg>
<svg class="r" style="left:1662px;top:184.5px;" width="7" height="7" viewBox="0 0 7 7"><path d="M6.500 0v6.500h-6.500z" fill="#555"/></svg>
<span class="t" style="top:184.00px;font-size:11.5px;left:1675.50px;letter-spacing:-0.513px;font-weight:bold;">PROPERTIES</span>
<span class="t" style="top:204.00px;font-size:11.8px;left:1675.50px;letter-spacing:-0.119px;">Name</span>
<div class="r" style="left:1675px;top:218px;width:218px;height:21px;background:#fff;border:1px solid #c8c6c4;box-sizing:border-box;"></div>
<span class="t" style="top:225.00px;font-size:11px;left:1681.00px;letter-spacing:-0.465px;">TBL_Facturas_DETALLE</span>
<span class="t" style="top:251.00px;font-size:11.8px;left:1675.50px;letter-spacing:-0.012px;color:#1a7fd4;">All Properties</span>
<svg class="r" style="left:1662px;top:285.5px;" width="7" height="7" viewBox="0 0 7 7"><path d="M6.500 0v6.500h-6.500z" fill="#555"/></svg>
<span class="t" style="top:285.00px;font-size:11.5px;left:1675.50px;letter-spacing:-0.403px;font-weight:bold;">APPLIED STEPS</span>
<div class="r" style="left:1675px;top:303px;width:218px;height:689px;border:1px solid #c8c6c4;box-sizing:border-box;"></div>
<div class="r" style="left:1676px;top:364px;width:216px;height:20px;background:#c8c8c8;"></div>
<div class="r" style="left:1676px;top:364px;width:2px;height:20px;background:#f2c811;"></div>
<span class="t" style="top:310.00px;font-size:11.8px;left:1698.20px;letter-spacing:-0.231px;">Source</span>
<svg class="r" style="left:1873px;top:309px;" width="11" height="11" viewBox="0 0 11 11"><g stroke="#b0b0b0" fill="none"><circle cx="5.500" cy="5.500" r="2.700" stroke-width="1.700"/><path d="M5.500 0.200v2M5.500 8.800v2M0.200 5.500h2M8.800 5.500h2M1.750 1.750l1.400 1.400M7.850 7.850l1.400 1.400M9.250 1.750l-1.400 1.400M3.150 7.850l-1.400 1.400" stroke-width="1.900"/></g></svg>
<span class="t" style="top:330.00px;font-size:11.8px;left:1698.20px;letter-spacing:0.174px;">Navigation</span>
<svg class="r" style="left:1873px;top:329px;" width="11" height="11" viewBox="0 0 11 11"><g stroke="#b0b0b0" fill="none"><circle cx="5.500" cy="5.500" r="2.700" stroke-width="1.700"/><path d="M5.500 0.200v2M5.500 8.800v2M0.200 5.500h2M8.800 5.500h2M1.750 1.750l1.400 1.400M7.850 7.850l1.400 1.400M9.250 1.750l-1.400 1.400M3.150 7.850l-1.400 1.400" stroke-width="1.900"/></g></svg>
<span class="t" style="top:350.00px;font-size:11.8px;left:1698.20px;letter-spacing:0.079px;">Added Custom</span>
<svg class="r" style="left:1873px;top:349px;" width="11" height="11" viewBox="0 0 11 11"><g stroke="#b0b0b0" fill="none"><circle cx="5.500" cy="5.500" r="2.700" stroke-width="1.700"/><path d="M5.500 0.200v2M5.500 8.800v2M0.200 5.500h2M8.800 5.500h2M1.750 1.750l1.400 1.400M7.850 7.850l1.400 1.400M9.250 1.750l-1.400 1.400M3.150 7.850l-1.400 1.400" stroke-width="1.900"/></g></svg>
<span class="t" style="top:370.00px;font-size:11.8px;left:1698.20px;letter-spacing:0.151px;">Added Conditional Column</span>
<svg class="r" style="left:1873px;top:369px;" width="11" height="11" viewBox="0 0 11 11"><g stroke="#bbbbbb" fill="none"><circle cx="5.500" cy="5.500" r="2.700" stroke-width="1.700"/><path d="M5.500 0.200v2M5.500 8.800v2M0.200 5.500h2M8.800 5.500h2M1.750 1.750l1.400 1.400M7.850 7.850l1.400 1.400M9.250 1.750l-1.400 1.400M3.150 7.850l-1.400 1.400" stroke-width="1.900"/></g></svg>
<svg class="r" style="left:1682.5px;top:369px;" width="12" height="11" viewBox="0 0 12 11"><path d="M1 1l9.500 9M10.500 1l-9.500 9" stroke="#666" stroke-width="1.300" fill="none"/></svg>
<div class="r" style="left:0px;top:1017px;width:1917px;height:22px;background:#f3f2f1;"></div>
<div class="r" style="left:0px;top:1017px;width:1917px;height:1px;background:#dcdbda;"></div>
<span class="t" style="top:1024.00px;font-size:10.7px;left:2.00px;letter-spacing:-0.162px;color:#444;">8 COLUMNS, 999+ ROWS</span>
<span class="t" style="top:1024.00px;font-size:10.7px;left:142.00px;letter-spacing:0.179px;color:#444;">Column profiling based on top 1000 rows</span>
<span class="t" style="top:1024.00px;font-size:10.7px;left:1745.00px;letter-spacing:-0.260px;color:#444;">PREVIEW DOWNLOADED AT 22:22</span>
<div class="r" style="left:494px;top:323px;width:925.5px;height:390.5px;background:#fff;border:1px solid #c6c6c6;box-sizing:border-box;"></div>
<svg class="r" style="left:1396.5px;top:331px;" width="13" height="13" viewBox="0 0 13 13"><path d="M1.300 1.300l10.400 10.400M11.700 1.300l-10.400 10.400" stroke="#444" stroke-width="1.100" fill="none"/></svg>
<span class="t" style="top:348.00px;font-size:19.8px;left:524.30px;letter-spacing:-0.412px;color:#323130;font-weight:bold;">Add Conditional Column</span>
<span class="t" style="top:389.00px;font-size:12.3px;left:524.30px;letter-spacing:0.379px;color:#333;">Add a conditional column that is computed from the other columns or values.</span>
<span class="t" style="top:419.00px;font-size:11.6px;left:524.30px;letter-spacing:0.176px;color:#333;">New column name</span>
<div class="r" style="left:524px;top:434px;width:172px;height:22px;background:#fff;border:1px solid #666;box-sizing:border-box;"></div>
<span class="t" style="top:440.00px;font-size:11.6px;left:530.00px;letter-spacing:0.098px;color:#222;">Condicional</span>
<span class="t" style="top:476.00px;font-size:11.6px;left:572.00px;letter-spacing:0.169px;color:#333;">Column Name</span>
<span class="t" style="top:476.00px;font-size:11.6px;left:713.00px;letter-spacing:0.278px;color:#333;">Operator</span>
<span class="t" style="top:476.00px;font-size:11.6px;left:854.50px;letter-spacing:0.138px;color:#333;">Value</span>
<span class="t" style="top:476.00px;font-size:11.6px;left:1119.80px;letter-spacing:0.446px;color:#333;">Output</span>
<svg class="r" style="left:888.7px;top:476.2px;" width="12" height="12" viewBox="0 0 12 12"><circle cx="6" cy="6" r="5.100" fill="none" stroke="#444" stroke-width="0.900"/><rect x="5.500" y="5" width="1" height="4" fill="#444"/><rect x="5.500" y="3" width="1" height="1.100" fill="#444"/></svg>
<svg class="r" style="left:1162px;top:476.2px;" width="12" height="12" viewBox="0 0 12 12"><circle cx="6" cy="6" r="5.100" fill="none" stroke="#444" stroke-width="0.900"/><rect x="5.500" y="5" width="1" height="4" fill="#444"/><rect x="5.500" y="3" width="1" height="1.100" fill="#444"/></svg>
<div class="r" style="left:524px;top:491px;width:864.7px;height:31.8px;background:#e6e6e6;"></div>
<div class="r" style="left:524px;top:491px;width:2px;height:31.8px;background:#f2b90a;"></div>
<span class="t" style="top:503.00px;font-size:11.6px;left:529.40px;color:#333;">If</span>
<div class="r" style="left:572px;top:496px;width:131.5px;height:22px;background:#fff;border:1px solid #bdbdbd;box-sizing:border-box;"></div>
<span class="t" style="top:502.00px;font-size:11.6px;left:578.50px;letter-spacing:-0.376px;color:#222;">Suma</span>
<svg class="r" style="left:689px;top:505px;" width="7" height="4" viewBox="0 0 7 4"><path d="M0.300 0.300h6.200l-3.100 3.300z" fill="#555"/></svg>
<div class="r" style="left:713px;top:496px;width:132px;height:22px;background:#fff;border:1px solid #bdbdbd;box-sizing:border-box;"></div>
<span class="t" style="top:502.00px;font-size:11.6px;left:718.80px;letter-spacing:-0.044px;color:#222;">is less than</span>
<svg class="r" style="left:830px;top:505px;" width="7" height="4" viewBox="0 0 7 4"><path d="M0.300 0.300h6.200l-3.100 3.300z" fill="#555"/></svg>
<div class="r" style="left:853px;top:496px;width:38px;height:22px;background:#e6e6e6;border:1px solid #c6c6c6;box-sizing:border-box;"></div><span class="t" style="top:498.00px;font-size:7.7px;left:856.00px;letter-spacing:-0.011px;color:#333;">ABC</span><span class="t" style="top:505.00px;font-size:9.8px;left:855.80px;letter-spacing:0.083px;color:#333;">123</span><svg class="r" style="left:878.5px;top:504.8px;" width="7" height="4" viewBox="0 0 7 4"><path d="M0.300 0.300h6.200l-3.100 3.300z" fill="#555"/></svg>
<div class="r" style="left:894px;top:496px;width:172px;height:22px;background:#fff;border:1px solid #bdbdbd;box-sizing:border-box;"></div>
<span class="t" style="top:502.00px;font-size:11.6px;left:900.00px;letter-spacing:-0.118px;color:#222;">200</span>
<span class="t" style="top:503.00px;font-size:11.6px;left:1077.70px;letter-spacing:-0.235px;color:#333;">Then</span>
<div class="r" style="left:1121px;top:496px;width:38px;height:22px;background:#e6e6e6;border:1px solid #c6c6c6;box-sizing:border-box;"></div><span class="t" style="top:498.00px;font-size:7.7px;left:1124.00px;letter-spacing:-0.011px;color:#333;">ABC</span><span class="t" style="top:505.00px;font-size:9.8px;left:1123.80px;letter-spacing:0.083px;color:#333;">123</span><svg class="r" style="left:1146.5px;top:504.8px;" width="7" height="4" viewBox="0 0 7 4"><path d="M0.300 0.300h6.200l-3.100 3.300z" fill="#555"/></svg>
<div class="r" style="left:1162px;top:496px;width:172px;height:22px;background:#fff;border:1px solid #bdbdbd;box-sizing:border-box;"></div>
<span class="t" style="top:502.00px;font-size:11.6px;left:1168.40px;letter-spacing:-0.204px;color:#222;">Bajo</span>
<div class="r" style="left:1349.9px;top:506.3px;width:2.6px;height:2.6px;background:#333;border-radius:50%;"></div>
<div class="r" style="left:1356.4px;top:506.3px;width:2.6px;height:2.6px;background:#333;border-radius:50%;"></div>
<div class="r" style="left:1362.8px;top:506.3px;width:2.6px;height:2.6px;background:#333;border-radius:50%;"></div>
<div class="r" style="left:524px;top:543px;width:72px;height:22px;background:#fff;border:1px solid #777;box-sizing:border-box;"></div>
<span class="t" style="top:549.00px;font-size:10.8px;left:534.00px;letter-spacing:-0.354px;color:#222;">Add Clause</span>
<span class="t" style="top:595.00px;font-size:11.6px;left:524.60px;letter-spacing:-0.791px;color:#333;">Else</span>
<svg class="r" style="left:549.6px;top:595.4px;" width="12" height="12" viewBox="0 0 12 12"><circle cx="6" cy="6" r="5.100" fill="none" stroke="#444" stroke-width="0.900"/><rect x="5.500" y="5" width="1" height="4" fill="#444"/><rect x="5.500" y="3" width="1" height="1.100" fill="#444"/></svg>
<div class="r" style="left:524px;top:610px;width:38px;height:22px;background:#fff;border:1px solid #c6c6c6;box-sizing:border-box;"></div><span class="t" style="top:612.00px;font-size:7.7px;left:527.00px;letter-spacing:-0.011px;color:#333;">ABC</span><span class="t" style="top:619.00px;font-size:9.8px;left:526.80px;letter-spacing:0.083px;color:#333;">123</span><svg class="r" style="left:549.5px;top:618.8px;" width="7" height="4" viewBox="0 0 7 4"><path d="M0.300 0.300h6.200l-3.100 3.300z" fill="#555"/></svg>
<div class="r" style="left:565px;top:610px;width:172px;height:22px;background:#fff;border:1px solid #bdbdbd;box-sizing:border-box;"></div>
<span class="t" style="top:615.00px;font-size:11.6px;left:574.80px;letter-spacing:0.278px;color:#222;">Alto</span>
<div class="r" style="left:1256px;top:662px;width:60px;height:22px;background:#f2c811;"></div>
<span class="t" style="top:668.00px;font-size:11.3px;left:1278.30px;letter-spacing:-0.663px;color:#333;">OK</span>
<div class="r" style="left:1329px;top:662px;width:60px;height:22px;background:#fff;border:1px solid #666;box-sizing:border-box;"></div>
<span class="t" style="top:668.00px;font-size:11.3px;left:1343.30px;letter-spacing:-0.696px;color:#333;">Cancel</span>
<svg class="r" style="left:0;top:0;mix-blend-mode:multiply;" width="1917" height="1079" viewBox="0 0 1917 1079"><path d="M529.0 431.9L542.5 431.2L563.7 432.9L590.6 434.7L591.6 450.0L560.0 450.0L546.2 448.1L529.0 446.9z" fill="#ffff00"/><path d="M570.0 507.7L619.7 506.9L619.7 522.6L570.0 522.6z" fill="#ffff00"/><path d="M889.1 505.0L919.4 503.7L919.8 519.4L898.1 519.8L897.5 520.6L889.1 520.6z" fill="#ffff00"/><path d="M1157.1 497.9L1161.8 498.2L1162.6 499.0L1173.6 500.5L1187.6 502.9L1191.9 504.1L1191.9 519.3L1184.5 520.9L1175.1 518.8L1162.6 516.6L1157.9 515.4z" fill="#ffff00"/><path d="M514.0 548.1L525.0 548.5L557.5 547.5L578.7 545.0L586.9 544.0L586.9 560.6L575.0 563.1L557.5 565.2L530.0 565.6L517.5 564.4L514.0 563.5z" fill="#ffff00"/><path d="M569.0 607.2L581.2 607.2L586.2 608.7L620.6 609.1L620.6 624.7L615.0 625.6L596.2 625.6L575.0 623.7L569.0 623.5z" fill="#ffff00"/></svg>
<div class="r" style="left:0px;top:1039px;width:1917px;height:40px;background:linear-gradient(90deg,#213a45 0%,#203641 48%,#1e313f 68%,#1b2a41 80%,#1a273f 100%);"></div>
<svg class="r" style="left:13px;top:1050.5px;" width="17" height="17" viewBox="0 0 17 17"><path d="M0 2.400l6.900-0.950v6.700h-6.900zM7.700 1.350l9.300-1.300v8.100h-9.300zM0 8.950h6.900v6.700l-6.900-0.950zM7.700 8.950h9.300v8.050l-9.300-1.300z" fill="#fff"/></svg>
<div class="r" style="left:45px;top:1039px;width:344px;height:40px;background:#f2f2f2;"></div>
<div class="r" style="left:45px;top:1039px;width:344px;height:1px;background:#bdbdbd;"></div>
<svg class="r" style="left:56px;top:1050px;" width="18" height="18" viewBox="0 0 18 18"><circle cx="11" cy="6.800" r="5.300" fill="none" stroke="#222" stroke-width="1.400"/><path d="M7.200 10.600l-6.200 6.400" stroke="#222" stroke-width="1.500"/></svg>
<span class="t" style="top:1052.00px;font-size:15px;left:85.00px;letter-spacing:-0.269px;color:#333;">Escribe aquí para buscar</span>
<svg class="r" style="left:305px;top:1038px;overflow:hidden;" width="84" height="41" viewBox="0 0 84 41">
      <defs><radialGradient id="ow1" cx="0.45" cy="0.4" r="0.7"><stop offset="0" stop-color="#d08a6a"/><stop offset="1" stop-color="#a5644a"/></radialGradient>
      <linearGradient id="ow2" x1="0" y1="0" x2="0" y2="1"><stop offset="0" stop-color="#5aa52a"/><stop offset="1" stop-color="#3f8a1e"/></linearGradient></defs>
      <path d="M6.500 41c2-5 9-8.500 20-8.500h30c8 0 14-3 20-4.500 3-0.800 6 0 8 1v12z" fill="url(#ow2)"/>
      <path d="M59 37.500c1-5 2-9 4-12l4 1.500-3 11zM76 29l5 1.500-1 5-5-1z" fill="#2b7d3a"/>
      <ellipse cx="21" cy="28.500" rx="8.800" ry="10" fill="#f1ebdf"/>
      <path d="M18.800 20.700L29.100 18.800L32.900 26.300L30.500 37L26.300 32.900L20.200 26.300z" fill="url(#ow1)"/>
      <ellipse cx="20.200" cy="13.800" rx="8.200" ry="6.900" fill="url(#ow1)"/>
      <path d="M12.500 10l3.500 1.300-3 0.800zM28 10l-3.500 1.300 3 0.800z" fill="#efe6da"/>
      <circle cx="19" cy="12.900" r="2.100" fill="#b9a86a"/><circle cx="25.100" cy="12.700" r="2.100" fill="#b9a86a"/><circle cx="19" cy="12.900" r="1.500" fill="#1b1b5a"/><circle cx="25.100" cy="12.700" r="1.500" fill="#1b1b5a"/>
      <path d="M21.500 15.300h2.200l-1.100 2z" fill="#e3b64a"/>
      <path d="M37.600 37.600L46.900 32.900L51.600 23.500L60.100 26.300L60.600 31.900L56.300 37.800z" fill="#f1ebdf"/>
      <path d="M30.500 37.100C31 33 33 27 37.600 20.200C41 17 46 14.500 50.700 13.600L51.600 22.500C51.500 26 50.500 28 49.300 30C47 33 45 34.500 42.300 35.700C40 37 37 37.600 35.700 37.600z" fill="url(#ow1)"/>
      <ellipse cx="60.100" cy="15.700" rx="8.700" ry="10.200" transform="rotate(-14 60.100 15.700)" fill="url(#ow1)"/>
      <path d="M60.800 6.300l1.200 3.200M64.800 18.500l1 4.800" stroke="#efe6da" stroke-width="0.900" fill="none"/>
      <circle cx="58.900" cy="11.500" r="2.900" fill="#a89a52"/><circle cx="61.500" cy="20.700" r="2.900" fill="#a89a52"/><circle cx="58.900" cy="11.500" r="2.200" fill="#1b1b5a"/><circle cx="61.500" cy="20.700" r="2.200" fill="#1b1b5a"/>
      <path d="M55.500 17l2.800-1 0.200 2.200z" fill="#e8c04a"/>
      <ellipse cx="69" cy="31.300" rx="8" ry="6" fill="#c08565"/>
      <path d="M62.500 28.300q2.500-1.300 5 0M71.800 28.300q2.500-1.300 5 0" stroke="#efe6da" stroke-width="1" fill="none"/>
      <path d="M64.500 31.500q1.300-1.500 2.600 0M72.300 31.500q1.300-1.500 2.600 0" stroke="#3a2a3a" stroke-width="0.700" fill="none"/>
      <path d="M69 32l1.600 0-0.800 2.600z" fill="#e8c86a"/>
      <path d="M45.300 4.800l1.300 2.700 2.900-0.300-2 2.100 1.300 2.700-2.700-1.300-2.300 2-0.100-3-2.600-1.400 3-0.600z" fill="#e879f9"/>
      <circle cx="33.900" cy="15.300" r="2.100" fill="#ffa800"/><circle cx="76.100" cy="14.600" r="2.100" fill="#3ecf5e"/>
    </svg>
<svg class="r" style="left:403px;top:1049px;" width="20" height="20" viewBox="0 0 20 20"><circle cx="10" cy="10" r="6.900" fill="none" stroke="#fff" stroke-width="2"/></svg>
<svg class="r" style="left:452px;top:1050px;" width="18" height="17" viewBox="0 0 18 17"><g fill="none" stroke="#fff" stroke-width="1.300"><rect x="1.500" y="4" width="9" height="8.500"/><path d="M0.500 1.700h11M0.500 14.800h11"/></g><rect x="14" y="1" width="1.500" height="2.800" fill="#fff"/><rect x="13.500" y="4.800" width="2.500" height="3.400" fill="#fff"/><rect x="14" y="9.500" width="1.500" height="6" fill="#fff"/></svg>
<svg class="r" style="left:499px;top:1046.5px;" width="25" height="25" viewBox="0 0 25 25"><defs><linearGradient id="eg1" x1="0" y1="0" x2="1" y2="1"><stop offset="0" stop-color="#35c1f1"/><stop offset="1" stop-color="#0c59a4"/></linearGradient>
      <linearGradient id="eg2" x1="0" y1="1" x2="1" y2="0"><stop offset="0" stop-color="#2fb3e8"/><stop offset="0.600" stop-color="#3fd27a"/><stop offset="1" stop-color="#7ee04a"/></linearGradient></defs>
      <circle cx="12.500" cy="12.500" r="12" fill="url(#eg1)"/>
      <path d="M1 10c2-6 7-9.500 12-9.500 7 0 11.500 5 11.500 10.500 0 3.500-2.500 6-5.800 6-2.500 0-3.700-1.200-3.700-2.200 0-0.800 1-1.300 1-3 0-2.800-2.800-5-6.500-5-3.500 0-6.800 1.500-8.500 3.200z" fill="url(#eg2)"/>
      <path d="M9 8.500c-3 1.500-4.500 4.500-4 8 0.600 4 4 7.500 8.500 8 4 0.300 7-1.200 9-3.500-2.500 1.300-5.500 1.300-8 0-3.500-1.800-5.500-5.500-5-9 0.200-1.500-0.200-2.800-0.500-3.500z" fill="#0a4d94"/></svg>
<svg class="r" style="left:549px;top:1049.5px;" width="23" height="19" viewBox="0 0 23 19"><path d="M0.500 2.500c0-1 0.600-1.700 1.500-1.700h6.500l2 2h10.500c0.800 0 1.400 0.600 1.400 1.400v12.800h-21.900z" fill="#e9a820"/>
      <rect x="0.500" y="4.300" width="21.900" height="13.900" rx="0.800" fill="#fbd560"/><path d="M4.500 18.200v-6c0-0.800 0.500-1.200 1.200-1.200h11.500c0.700 0 1.200 0.400 1.200 1.200v6h-3.800v-3h-6.300v3z" fill="#3d95db"/></svg>
<svg class="r" style="left:597px;top:1047px;" width="25" height="25" viewBox="0 0 25 25"><path d="M7.500 8v-4c0-1 0.700-1.700 1.700-1.700h6.600c1 0 1.700 0.700 1.700 1.700v4" fill="none" stroke="#3ea6e8" stroke-width="1.600"/>
      <path d="M1.500 7h22l-0.500 14c0 1.500-1 2.500-2.500 2.500h-16c-1.500 0-2.500-1-2.500-2.500z" fill="#f3f3f3"/>
      <rect x="7.500" y="10.500" width="4.200" height="4.200" fill="#f25022"/><rect x="12.700" y="10.500" width="4.200" height="4.200" fill="#7fba00"/><rect x="7.500" y="15.700" width="4.200" height="4.200" fill="#00a4ef"/><rect x="12.700" y="15.700" width="4.200" height="4.200" fill="#ffb900"/></svg>
<svg class="r" style="left:646px;top:1046px;" width="26" height="25" viewBox="0 0 26 25"><text x="1.500" y="22.500" font-family="Liberation Sans" font-weight="bold" font-size="31" fill="#35aeea">e</text>
      <path d="M2.500 22.500c-3-2-2-7.500 4-12.500 6-5 14-8.500 17-6.500 1.500 1 1 3.500 0 5.500" fill="none" stroke="#f0b91a" stroke-width="2"/></svg>
<svg class="r" style="left:695px;top:1047px;" width="25" height="24" viewBox="0 0 25 24"><path d="M9 1.500l14 1-3 19.500-2 1.500-16.500-2.500z" fill="#dfe9ee"/><path d="M9 1.500l12 0.800-7 19.700-12.500-1z" fill="#8fc4cf"/><path d="M10 1.500l10.500 0.800-5 14-10.500-2z" fill="#b8dde3"/>
      <path d="M21.800 2.500l1.200 0.200-3 19-1 0.700z" fill="#c9a658"/><path d="M9.500 1h12" stroke="#7a8a90" stroke-width="1.200" stroke-dasharray="1 1"/></svg>
<svg class="r" style="left:745px;top:1046.5px;" width="27" height="26" viewBox="0 0 27 26"><circle cx="11.500" cy="12" r="11" fill="#db4437"/><path d="M11.500 12l-9.500 5.500a11 11 0 0 0 9.500 5.500 11 11 0 0 0 4-0.800z" fill="#0f9d58"/><path d="M11.500 12h11a11 11 0 0 1-7 10.200z" fill="#ffcd40"/>
      <circle cx="11.500" cy="12" r="5" fill="#fff"/><circle cx="11.500" cy="12" r="4" fill="#4285f4"/>
      <circle cx="19.500" cy="18.500" r="7" fill="#5c6254"/><path d="M16 13c3 0 7 1 9 3l1 5-4 4-5-1z" fill="#d9dccb"/><path d="M13 17l3-4 2 6-1 5-3-2z" fill="#2b2f2a"/><circle cx="17" cy="14" r="1.800" fill="#caa58c"/></svg>
<svg class="r" style="left:793px;top:1047px;" width="25" height="24" viewBox="0 0 25 24"><rect x="6.500" y="0.500" width="18" height="23" rx="1.200" fill="#41a5ee"/><rect x="6.500" y="6.300" width="18" height="5.800" fill="#2b7cd3"/><rect x="6.500" y="12.100" width="18" height="5.800" fill="#185abd"/><path d="M6.500 17.900h18v4.400c0 0.700-0.500 1.200-1.200 1.200h-15.600c-0.700 0-1.200-0.500-1.200-1.200z" fill="#103f91"/>
      <rect x="0" y="5.500" width="13" height="13" rx="1" fill="#185abd"/><text x="6.500" y="16" text-anchor="middle" font-family="Liberation Sans" font-weight="bold" font-size="10.500" fill="#fff">W</text></svg>
<div class="r" style="left:831px;top:1039px;width:44px;height:40px;background:#3c515b;"></div>
<div class="r" style="left:875px;top:1039px;width:3.5px;height:40px;background:#33474f;"></div>
<svg class="r" style="left:844px;top:1046.5px;" width="21" height="25" viewBox="0 0 21 25"><defs><linearGradient id="tb1" x1="0" y1="0" x2="1" y2="0"><stop offset="0" stop-color="#ebb30f"/><stop offset="1" stop-color="#c98a0c"/></linearGradient><linearGradient id="tb2" x1="0" y1="0" x2="0" y2="1"><stop offset="0" stop-color="#f6d751"/><stop offset="1" stop-color="#e6ad10"/></linearGradient>
      <linearGradient id="tb3" x1="0" y1="0" x2="0" y2="1"><stop offset="0" stop-color="#faea9a"/><stop offset="1" stop-color="#f4d04a"/></linearGradient></defs>
      <rect x="10" y="0.500" width="9.500" height="24" rx="1" fill="url(#tb1)"/><rect x="5" y="7.500" width="9" height="17" rx="1" fill="url(#tb2)"/><rect x="0.500" y="14" width="8.500" height="10.500" rx="1" fill="url(#tb3)"/></svg>
<div class="r" style="left:540.5px;top:1076.8px;width:40px;height:2.2px;background:#76b9ed;"></div>
<div class="r" style="left:687.8px;top:1076.8px;width:40px;height:2.2px;background:#76b9ed;"></div>
<div class="r" style="left:736.7px;top:1076.8px;width:40px;height:2.2px;background:#76b9ed;"></div>
<div class="r" style="left:785.5px;top:1076.8px;width:31.5px;height:2.2px;background:#76b9ed;"></div>
<div class="r" style="left:831px;top:1076.8px;width:47.5px;height:2.2px;background:#76b9ed;"></div>
<div class="r" style="left:817px;top:1076.8px;width:8.5px;height:2.2px;background:#4d7da3;"></div>
<svg class="r" style="left:1583px;top:1047px;" width="26" height="22" viewBox="0 0 26 22"><circle cx="11" cy="9" r="7.200" fill="#f7b52c"/><path d="M6 21.500c-3 0-5-2-5-4.500s2-4.500 4.500-4.500c0.800-2.800 3.200-4.500 6-4.500 3.300 0 6 2.300 6.500 5.500 3.200 0 5.500 1.800 5.500 4.300s-2 3.700-4.500 3.700z" fill="#e8ecf1"/><path d="M6 21.500c-3 0-5-2-5-4.500 6 2.500 15 3 22.500 0.800 0 2.500-2 3.700-4.500 3.700z" fill="#c9d3de"/></svg>
<span class="t" style="top:1054.00px;font-size:13.6px;left:1617.00px;letter-spacing:-0.697px;color:#fff;">17°C</span>
<span class="t" style="top:1054.00px;font-size:13.6px;left:1654.40px;letter-spacing:-0.220px;color:#fff;">Parc. soleado</span>
<svg class="r" style="left:1751px;top:1053px;" width="14" height="10" viewBox="0 0 14 10"><path d="M1.500 8.500l5.500-5.700 5.500 5.700" fill="none" stroke="#fff" stroke-width="1.300"/></svg>
<svg class="r" style="left:1773px;top:1050px;" width="19" height="16" viewBox="0 0 19 16"><path d="M4.500 13.500c-2 0-3.500-1.300-3.500-3.200s1.500-3.200 3.300-3.200c0.500-2.200 2.300-3.800 4.700-3.800 2.200 0 4 1.300 4.700 3.300 2 0 3.800 1.400 3.800 3.500 0 2-1.500 3.400-3.500 3.400z" fill="#8d979e"/><path d="M1.500 1.500l16 13.500" stroke="#1c2d3c" stroke-width="2.600"/><path d="M1.500 1.500l16 13.500" stroke="#8d979e" stroke-width="1.200"/></svg>
<span class="t" style="top:1044.00px;font-size:11.6px;left:1815.00px;letter-spacing:-0.406px;color:#fff;">22:22</span>
<span class="t" style="top:1062.00px;font-size:11.6px;left:1800.00px;letter-spacing:-0.066px;color:#fff;">22/08/2022</span>
<svg class="r" style="left:1875px;top:1049.5px;" width="19" height="19" viewBox="0 0 19 19"><path d="M1.500 1.500h14.500v11.500h-4.500l-3.500 3.500v-3.500h-6.500z" fill="#fff"/><path d="M4 5h9.500M4 7.500h9.500M4 10h6" stroke="#1b2c3c" stroke-width="1"/>
      <circle cx="14.500" cy="13.500" r="3.600" fill="#1b2c3c"/><circle cx="14.500" cy="13.500" r="2.600" fill="none" stroke="#fff" stroke-width="1"/><path d="M13.200 13.500l1 1.100 1.700-2" stroke="#fff" stroke-width="0.000" fill="none"/><path d="M14.500 11.800v2l1.200 0.800" stroke="#fff" stroke-width="0.000" fill="none"/></svg>
<div class="r" style="left:1912.5px;top:1039px;width:1px;height:40px;background:#5a6a76;"></div>
</body></html>
